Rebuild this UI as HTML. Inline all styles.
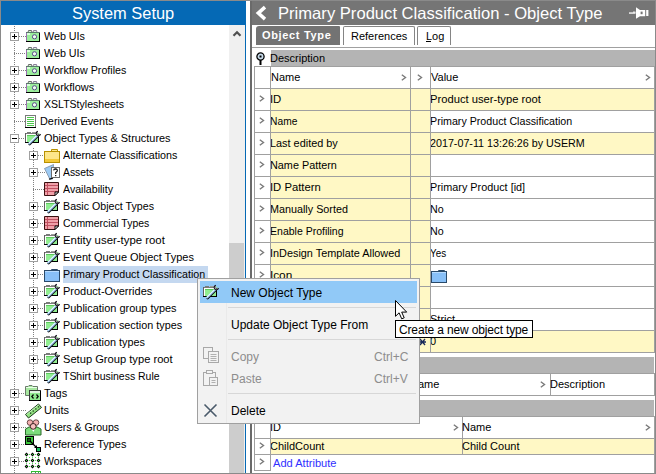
<!DOCTYPE html>
<html><head><meta charset="utf-8"><style>
html,body{margin:0;padding:0;}
body{width:656px;height:474px;position:relative;overflow:hidden;background:#fff;font-family:"Liberation Sans", sans-serif;}
</style></head><body>
<div style="position:absolute;left:1px;top:1px;width:245px;height:24px;background:#0569b5;"></div>
<div style="position:absolute;left:72px;top:3px;white-space:pre;font-size:16.5px;line-height:20px;font-weight:400;color:#ffffff;transform:scaleX(0.9950);transform-origin:1px 0;">System Setup</div>
<div style="position:absolute;left:245px;top:25px;width:1px;height:448px;background:#0569b5;"></div>
<div style="position:absolute;left:229px;top:25px;width:16px;height:448px;background:#f0f0f0;"></div>
<div style="position:absolute;left:229px;top:243px;width:15px;height:230px;background:#cdcdcd;"></div>
<svg style="position:absolute;left:232px;top:30px;overflow:visible" width="10" height="8" viewBox="0 0 10 8"><path d="M1.5 5.8 L5 2.3 L8.5 5.8" stroke="#505050" stroke-width="2.2" fill="none"/></svg>
<div style="position:absolute;left:14px;top:26px;width:1px;height:1px;background:#808080;"></div>
<div style="position:absolute;left:14px;top:28px;width:1px;height:1px;background:#808080;"></div>
<div style="position:absolute;left:14px;top:30px;width:1px;height:1px;background:#808080;"></div>
<div style="position:absolute;left:14px;top:32px;width:1px;height:1px;background:#808080;"></div>
<div style="position:absolute;left:14px;top:34px;width:1px;height:1px;background:#808080;"></div>
<div style="position:absolute;left:14px;top:36px;width:1px;height:1px;background:#808080;"></div>
<div style="position:absolute;left:14px;top:38px;width:1px;height:1px;background:#808080;"></div>
<div style="position:absolute;left:14px;top:40px;width:1px;height:1px;background:#808080;"></div>
<div style="position:absolute;left:14px;top:42px;width:1px;height:1px;background:#808080;"></div>
<div style="position:absolute;left:14px;top:44px;width:1px;height:1px;background:#808080;"></div>
<div style="position:absolute;left:14px;top:46px;width:1px;height:1px;background:#808080;"></div>
<div style="position:absolute;left:14px;top:48px;width:1px;height:1px;background:#808080;"></div>
<div style="position:absolute;left:14px;top:50px;width:1px;height:1px;background:#808080;"></div>
<div style="position:absolute;left:14px;top:52px;width:1px;height:1px;background:#808080;"></div>
<div style="position:absolute;left:14px;top:54px;width:1px;height:1px;background:#808080;"></div>
<div style="position:absolute;left:14px;top:56px;width:1px;height:1px;background:#808080;"></div>
<div style="position:absolute;left:14px;top:58px;width:1px;height:1px;background:#808080;"></div>
<div style="position:absolute;left:14px;top:60px;width:1px;height:1px;background:#808080;"></div>
<div style="position:absolute;left:14px;top:62px;width:1px;height:1px;background:#808080;"></div>
<div style="position:absolute;left:14px;top:64px;width:1px;height:1px;background:#808080;"></div>
<div style="position:absolute;left:14px;top:66px;width:1px;height:1px;background:#808080;"></div>
<div style="position:absolute;left:14px;top:68px;width:1px;height:1px;background:#808080;"></div>
<div style="position:absolute;left:14px;top:70px;width:1px;height:1px;background:#808080;"></div>
<div style="position:absolute;left:14px;top:72px;width:1px;height:1px;background:#808080;"></div>
<div style="position:absolute;left:14px;top:74px;width:1px;height:1px;background:#808080;"></div>
<div style="position:absolute;left:14px;top:76px;width:1px;height:1px;background:#808080;"></div>
<div style="position:absolute;left:14px;top:78px;width:1px;height:1px;background:#808080;"></div>
<div style="position:absolute;left:14px;top:80px;width:1px;height:1px;background:#808080;"></div>
<div style="position:absolute;left:14px;top:82px;width:1px;height:1px;background:#808080;"></div>
<div style="position:absolute;left:14px;top:84px;width:1px;height:1px;background:#808080;"></div>
<div style="position:absolute;left:14px;top:86px;width:1px;height:1px;background:#808080;"></div>
<div style="position:absolute;left:14px;top:88px;width:1px;height:1px;background:#808080;"></div>
<div style="position:absolute;left:14px;top:90px;width:1px;height:1px;background:#808080;"></div>
<div style="position:absolute;left:14px;top:92px;width:1px;height:1px;background:#808080;"></div>
<div style="position:absolute;left:14px;top:94px;width:1px;height:1px;background:#808080;"></div>
<div style="position:absolute;left:14px;top:96px;width:1px;height:1px;background:#808080;"></div>
<div style="position:absolute;left:14px;top:98px;width:1px;height:1px;background:#808080;"></div>
<div style="position:absolute;left:14px;top:100px;width:1px;height:1px;background:#808080;"></div>
<div style="position:absolute;left:14px;top:102px;width:1px;height:1px;background:#808080;"></div>
<div style="position:absolute;left:14px;top:104px;width:1px;height:1px;background:#808080;"></div>
<div style="position:absolute;left:14px;top:106px;width:1px;height:1px;background:#808080;"></div>
<div style="position:absolute;left:14px;top:108px;width:1px;height:1px;background:#808080;"></div>
<div style="position:absolute;left:14px;top:110px;width:1px;height:1px;background:#808080;"></div>
<div style="position:absolute;left:14px;top:112px;width:1px;height:1px;background:#808080;"></div>
<div style="position:absolute;left:14px;top:114px;width:1px;height:1px;background:#808080;"></div>
<div style="position:absolute;left:14px;top:116px;width:1px;height:1px;background:#808080;"></div>
<div style="position:absolute;left:14px;top:118px;width:1px;height:1px;background:#808080;"></div>
<div style="position:absolute;left:14px;top:120px;width:1px;height:1px;background:#808080;"></div>
<div style="position:absolute;left:14px;top:122px;width:1px;height:1px;background:#808080;"></div>
<div style="position:absolute;left:14px;top:124px;width:1px;height:1px;background:#808080;"></div>
<div style="position:absolute;left:14px;top:126px;width:1px;height:1px;background:#808080;"></div>
<div style="position:absolute;left:14px;top:128px;width:1px;height:1px;background:#808080;"></div>
<div style="position:absolute;left:14px;top:130px;width:1px;height:1px;background:#808080;"></div>
<div style="position:absolute;left:14px;top:132px;width:1px;height:1px;background:#808080;"></div>
<div style="position:absolute;left:14px;top:134px;width:1px;height:1px;background:#808080;"></div>
<div style="position:absolute;left:14px;top:136px;width:1px;height:1px;background:#808080;"></div>
<div style="position:absolute;left:14px;top:138px;width:1px;height:1px;background:#808080;"></div>
<div style="position:absolute;left:14px;top:140px;width:1px;height:1px;background:#808080;"></div>
<div style="position:absolute;left:14px;top:142px;width:1px;height:1px;background:#808080;"></div>
<div style="position:absolute;left:14px;top:144px;width:1px;height:1px;background:#808080;"></div>
<div style="position:absolute;left:14px;top:146px;width:1px;height:1px;background:#808080;"></div>
<div style="position:absolute;left:14px;top:148px;width:1px;height:1px;background:#808080;"></div>
<div style="position:absolute;left:14px;top:150px;width:1px;height:1px;background:#808080;"></div>
<div style="position:absolute;left:14px;top:152px;width:1px;height:1px;background:#808080;"></div>
<div style="position:absolute;left:14px;top:154px;width:1px;height:1px;background:#808080;"></div>
<div style="position:absolute;left:14px;top:156px;width:1px;height:1px;background:#808080;"></div>
<div style="position:absolute;left:14px;top:158px;width:1px;height:1px;background:#808080;"></div>
<div style="position:absolute;left:14px;top:160px;width:1px;height:1px;background:#808080;"></div>
<div style="position:absolute;left:14px;top:162px;width:1px;height:1px;background:#808080;"></div>
<div style="position:absolute;left:14px;top:164px;width:1px;height:1px;background:#808080;"></div>
<div style="position:absolute;left:14px;top:166px;width:1px;height:1px;background:#808080;"></div>
<div style="position:absolute;left:14px;top:168px;width:1px;height:1px;background:#808080;"></div>
<div style="position:absolute;left:14px;top:170px;width:1px;height:1px;background:#808080;"></div>
<div style="position:absolute;left:14px;top:172px;width:1px;height:1px;background:#808080;"></div>
<div style="position:absolute;left:14px;top:174px;width:1px;height:1px;background:#808080;"></div>
<div style="position:absolute;left:14px;top:176px;width:1px;height:1px;background:#808080;"></div>
<div style="position:absolute;left:14px;top:178px;width:1px;height:1px;background:#808080;"></div>
<div style="position:absolute;left:14px;top:180px;width:1px;height:1px;background:#808080;"></div>
<div style="position:absolute;left:14px;top:182px;width:1px;height:1px;background:#808080;"></div>
<div style="position:absolute;left:14px;top:184px;width:1px;height:1px;background:#808080;"></div>
<div style="position:absolute;left:14px;top:186px;width:1px;height:1px;background:#808080;"></div>
<div style="position:absolute;left:14px;top:188px;width:1px;height:1px;background:#808080;"></div>
<div style="position:absolute;left:14px;top:190px;width:1px;height:1px;background:#808080;"></div>
<div style="position:absolute;left:14px;top:192px;width:1px;height:1px;background:#808080;"></div>
<div style="position:absolute;left:14px;top:194px;width:1px;height:1px;background:#808080;"></div>
<div style="position:absolute;left:14px;top:196px;width:1px;height:1px;background:#808080;"></div>
<div style="position:absolute;left:14px;top:198px;width:1px;height:1px;background:#808080;"></div>
<div style="position:absolute;left:14px;top:200px;width:1px;height:1px;background:#808080;"></div>
<div style="position:absolute;left:14px;top:202px;width:1px;height:1px;background:#808080;"></div>
<div style="position:absolute;left:14px;top:204px;width:1px;height:1px;background:#808080;"></div>
<div style="position:absolute;left:14px;top:206px;width:1px;height:1px;background:#808080;"></div>
<div style="position:absolute;left:14px;top:208px;width:1px;height:1px;background:#808080;"></div>
<div style="position:absolute;left:14px;top:210px;width:1px;height:1px;background:#808080;"></div>
<div style="position:absolute;left:14px;top:212px;width:1px;height:1px;background:#808080;"></div>
<div style="position:absolute;left:14px;top:214px;width:1px;height:1px;background:#808080;"></div>
<div style="position:absolute;left:14px;top:216px;width:1px;height:1px;background:#808080;"></div>
<div style="position:absolute;left:14px;top:218px;width:1px;height:1px;background:#808080;"></div>
<div style="position:absolute;left:14px;top:220px;width:1px;height:1px;background:#808080;"></div>
<div style="position:absolute;left:14px;top:222px;width:1px;height:1px;background:#808080;"></div>
<div style="position:absolute;left:14px;top:224px;width:1px;height:1px;background:#808080;"></div>
<div style="position:absolute;left:14px;top:226px;width:1px;height:1px;background:#808080;"></div>
<div style="position:absolute;left:14px;top:228px;width:1px;height:1px;background:#808080;"></div>
<div style="position:absolute;left:14px;top:230px;width:1px;height:1px;background:#808080;"></div>
<div style="position:absolute;left:14px;top:232px;width:1px;height:1px;background:#808080;"></div>
<div style="position:absolute;left:14px;top:234px;width:1px;height:1px;background:#808080;"></div>
<div style="position:absolute;left:14px;top:236px;width:1px;height:1px;background:#808080;"></div>
<div style="position:absolute;left:14px;top:238px;width:1px;height:1px;background:#808080;"></div>
<div style="position:absolute;left:14px;top:240px;width:1px;height:1px;background:#808080;"></div>
<div style="position:absolute;left:14px;top:242px;width:1px;height:1px;background:#808080;"></div>
<div style="position:absolute;left:14px;top:244px;width:1px;height:1px;background:#808080;"></div>
<div style="position:absolute;left:14px;top:246px;width:1px;height:1px;background:#808080;"></div>
<div style="position:absolute;left:14px;top:248px;width:1px;height:1px;background:#808080;"></div>
<div style="position:absolute;left:14px;top:250px;width:1px;height:1px;background:#808080;"></div>
<div style="position:absolute;left:14px;top:252px;width:1px;height:1px;background:#808080;"></div>
<div style="position:absolute;left:14px;top:254px;width:1px;height:1px;background:#808080;"></div>
<div style="position:absolute;left:14px;top:256px;width:1px;height:1px;background:#808080;"></div>
<div style="position:absolute;left:14px;top:258px;width:1px;height:1px;background:#808080;"></div>
<div style="position:absolute;left:14px;top:260px;width:1px;height:1px;background:#808080;"></div>
<div style="position:absolute;left:14px;top:262px;width:1px;height:1px;background:#808080;"></div>
<div style="position:absolute;left:14px;top:264px;width:1px;height:1px;background:#808080;"></div>
<div style="position:absolute;left:14px;top:266px;width:1px;height:1px;background:#808080;"></div>
<div style="position:absolute;left:14px;top:268px;width:1px;height:1px;background:#808080;"></div>
<div style="position:absolute;left:14px;top:270px;width:1px;height:1px;background:#808080;"></div>
<div style="position:absolute;left:14px;top:272px;width:1px;height:1px;background:#808080;"></div>
<div style="position:absolute;left:14px;top:274px;width:1px;height:1px;background:#808080;"></div>
<div style="position:absolute;left:14px;top:276px;width:1px;height:1px;background:#808080;"></div>
<div style="position:absolute;left:14px;top:278px;width:1px;height:1px;background:#808080;"></div>
<div style="position:absolute;left:14px;top:280px;width:1px;height:1px;background:#808080;"></div>
<div style="position:absolute;left:14px;top:282px;width:1px;height:1px;background:#808080;"></div>
<div style="position:absolute;left:14px;top:284px;width:1px;height:1px;background:#808080;"></div>
<div style="position:absolute;left:14px;top:286px;width:1px;height:1px;background:#808080;"></div>
<div style="position:absolute;left:14px;top:288px;width:1px;height:1px;background:#808080;"></div>
<div style="position:absolute;left:14px;top:290px;width:1px;height:1px;background:#808080;"></div>
<div style="position:absolute;left:14px;top:292px;width:1px;height:1px;background:#808080;"></div>
<div style="position:absolute;left:14px;top:294px;width:1px;height:1px;background:#808080;"></div>
<div style="position:absolute;left:14px;top:296px;width:1px;height:1px;background:#808080;"></div>
<div style="position:absolute;left:14px;top:298px;width:1px;height:1px;background:#808080;"></div>
<div style="position:absolute;left:14px;top:300px;width:1px;height:1px;background:#808080;"></div>
<div style="position:absolute;left:14px;top:302px;width:1px;height:1px;background:#808080;"></div>
<div style="position:absolute;left:14px;top:304px;width:1px;height:1px;background:#808080;"></div>
<div style="position:absolute;left:14px;top:306px;width:1px;height:1px;background:#808080;"></div>
<div style="position:absolute;left:14px;top:308px;width:1px;height:1px;background:#808080;"></div>
<div style="position:absolute;left:14px;top:310px;width:1px;height:1px;background:#808080;"></div>
<div style="position:absolute;left:14px;top:312px;width:1px;height:1px;background:#808080;"></div>
<div style="position:absolute;left:14px;top:314px;width:1px;height:1px;background:#808080;"></div>
<div style="position:absolute;left:14px;top:316px;width:1px;height:1px;background:#808080;"></div>
<div style="position:absolute;left:14px;top:318px;width:1px;height:1px;background:#808080;"></div>
<div style="position:absolute;left:14px;top:320px;width:1px;height:1px;background:#808080;"></div>
<div style="position:absolute;left:14px;top:322px;width:1px;height:1px;background:#808080;"></div>
<div style="position:absolute;left:14px;top:324px;width:1px;height:1px;background:#808080;"></div>
<div style="position:absolute;left:14px;top:326px;width:1px;height:1px;background:#808080;"></div>
<div style="position:absolute;left:14px;top:328px;width:1px;height:1px;background:#808080;"></div>
<div style="position:absolute;left:14px;top:330px;width:1px;height:1px;background:#808080;"></div>
<div style="position:absolute;left:14px;top:332px;width:1px;height:1px;background:#808080;"></div>
<div style="position:absolute;left:14px;top:334px;width:1px;height:1px;background:#808080;"></div>
<div style="position:absolute;left:14px;top:336px;width:1px;height:1px;background:#808080;"></div>
<div style="position:absolute;left:14px;top:338px;width:1px;height:1px;background:#808080;"></div>
<div style="position:absolute;left:14px;top:340px;width:1px;height:1px;background:#808080;"></div>
<div style="position:absolute;left:14px;top:342px;width:1px;height:1px;background:#808080;"></div>
<div style="position:absolute;left:14px;top:344px;width:1px;height:1px;background:#808080;"></div>
<div style="position:absolute;left:14px;top:346px;width:1px;height:1px;background:#808080;"></div>
<div style="position:absolute;left:14px;top:348px;width:1px;height:1px;background:#808080;"></div>
<div style="position:absolute;left:14px;top:350px;width:1px;height:1px;background:#808080;"></div>
<div style="position:absolute;left:14px;top:352px;width:1px;height:1px;background:#808080;"></div>
<div style="position:absolute;left:14px;top:354px;width:1px;height:1px;background:#808080;"></div>
<div style="position:absolute;left:14px;top:356px;width:1px;height:1px;background:#808080;"></div>
<div style="position:absolute;left:14px;top:358px;width:1px;height:1px;background:#808080;"></div>
<div style="position:absolute;left:14px;top:360px;width:1px;height:1px;background:#808080;"></div>
<div style="position:absolute;left:14px;top:362px;width:1px;height:1px;background:#808080;"></div>
<div style="position:absolute;left:14px;top:364px;width:1px;height:1px;background:#808080;"></div>
<div style="position:absolute;left:14px;top:366px;width:1px;height:1px;background:#808080;"></div>
<div style="position:absolute;left:14px;top:368px;width:1px;height:1px;background:#808080;"></div>
<div style="position:absolute;left:14px;top:370px;width:1px;height:1px;background:#808080;"></div>
<div style="position:absolute;left:14px;top:372px;width:1px;height:1px;background:#808080;"></div>
<div style="position:absolute;left:14px;top:374px;width:1px;height:1px;background:#808080;"></div>
<div style="position:absolute;left:14px;top:376px;width:1px;height:1px;background:#808080;"></div>
<div style="position:absolute;left:14px;top:378px;width:1px;height:1px;background:#808080;"></div>
<div style="position:absolute;left:14px;top:380px;width:1px;height:1px;background:#808080;"></div>
<div style="position:absolute;left:14px;top:382px;width:1px;height:1px;background:#808080;"></div>
<div style="position:absolute;left:14px;top:384px;width:1px;height:1px;background:#808080;"></div>
<div style="position:absolute;left:14px;top:386px;width:1px;height:1px;background:#808080;"></div>
<div style="position:absolute;left:14px;top:388px;width:1px;height:1px;background:#808080;"></div>
<div style="position:absolute;left:14px;top:390px;width:1px;height:1px;background:#808080;"></div>
<div style="position:absolute;left:14px;top:392px;width:1px;height:1px;background:#808080;"></div>
<div style="position:absolute;left:14px;top:394px;width:1px;height:1px;background:#808080;"></div>
<div style="position:absolute;left:14px;top:396px;width:1px;height:1px;background:#808080;"></div>
<div style="position:absolute;left:14px;top:398px;width:1px;height:1px;background:#808080;"></div>
<div style="position:absolute;left:14px;top:400px;width:1px;height:1px;background:#808080;"></div>
<div style="position:absolute;left:14px;top:402px;width:1px;height:1px;background:#808080;"></div>
<div style="position:absolute;left:14px;top:404px;width:1px;height:1px;background:#808080;"></div>
<div style="position:absolute;left:14px;top:406px;width:1px;height:1px;background:#808080;"></div>
<div style="position:absolute;left:14px;top:408px;width:1px;height:1px;background:#808080;"></div>
<div style="position:absolute;left:14px;top:410px;width:1px;height:1px;background:#808080;"></div>
<div style="position:absolute;left:14px;top:412px;width:1px;height:1px;background:#808080;"></div>
<div style="position:absolute;left:14px;top:414px;width:1px;height:1px;background:#808080;"></div>
<div style="position:absolute;left:14px;top:416px;width:1px;height:1px;background:#808080;"></div>
<div style="position:absolute;left:14px;top:418px;width:1px;height:1px;background:#808080;"></div>
<div style="position:absolute;left:14px;top:420px;width:1px;height:1px;background:#808080;"></div>
<div style="position:absolute;left:14px;top:422px;width:1px;height:1px;background:#808080;"></div>
<div style="position:absolute;left:14px;top:424px;width:1px;height:1px;background:#808080;"></div>
<div style="position:absolute;left:14px;top:426px;width:1px;height:1px;background:#808080;"></div>
<div style="position:absolute;left:14px;top:428px;width:1px;height:1px;background:#808080;"></div>
<div style="position:absolute;left:14px;top:430px;width:1px;height:1px;background:#808080;"></div>
<div style="position:absolute;left:14px;top:432px;width:1px;height:1px;background:#808080;"></div>
<div style="position:absolute;left:14px;top:434px;width:1px;height:1px;background:#808080;"></div>
<div style="position:absolute;left:14px;top:436px;width:1px;height:1px;background:#808080;"></div>
<div style="position:absolute;left:14px;top:438px;width:1px;height:1px;background:#808080;"></div>
<div style="position:absolute;left:14px;top:440px;width:1px;height:1px;background:#808080;"></div>
<div style="position:absolute;left:14px;top:442px;width:1px;height:1px;background:#808080;"></div>
<div style="position:absolute;left:14px;top:444px;width:1px;height:1px;background:#808080;"></div>
<div style="position:absolute;left:14px;top:446px;width:1px;height:1px;background:#808080;"></div>
<div style="position:absolute;left:14px;top:448px;width:1px;height:1px;background:#808080;"></div>
<div style="position:absolute;left:14px;top:450px;width:1px;height:1px;background:#808080;"></div>
<div style="position:absolute;left:14px;top:452px;width:1px;height:1px;background:#808080;"></div>
<div style="position:absolute;left:14px;top:454px;width:1px;height:1px;background:#808080;"></div>
<div style="position:absolute;left:14px;top:456px;width:1px;height:1px;background:#808080;"></div>
<div style="position:absolute;left:14px;top:458px;width:1px;height:1px;background:#808080;"></div>
<div style="position:absolute;left:14px;top:460px;width:1px;height:1px;background:#808080;"></div>
<div style="position:absolute;left:14px;top:462px;width:1px;height:1px;background:#808080;"></div>
<div style="position:absolute;left:14px;top:464px;width:1px;height:1px;background:#808080;"></div>
<div style="position:absolute;left:14px;top:466px;width:1px;height:1px;background:#808080;"></div>
<div style="position:absolute;left:14px;top:468px;width:1px;height:1px;background:#808080;"></div>
<div style="position:absolute;left:14px;top:470px;width:1px;height:1px;background:#808080;"></div>
<div style="position:absolute;left:14px;top:472px;width:1px;height:1px;background:#808080;"></div>
<div style="position:absolute;left:33px;top:148px;width:1px;height:1px;background:#808080;"></div>
<div style="position:absolute;left:33px;top:150px;width:1px;height:1px;background:#808080;"></div>
<div style="position:absolute;left:33px;top:152px;width:1px;height:1px;background:#808080;"></div>
<div style="position:absolute;left:33px;top:154px;width:1px;height:1px;background:#808080;"></div>
<div style="position:absolute;left:33px;top:156px;width:1px;height:1px;background:#808080;"></div>
<div style="position:absolute;left:33px;top:158px;width:1px;height:1px;background:#808080;"></div>
<div style="position:absolute;left:33px;top:160px;width:1px;height:1px;background:#808080;"></div>
<div style="position:absolute;left:33px;top:162px;width:1px;height:1px;background:#808080;"></div>
<div style="position:absolute;left:33px;top:164px;width:1px;height:1px;background:#808080;"></div>
<div style="position:absolute;left:33px;top:166px;width:1px;height:1px;background:#808080;"></div>
<div style="position:absolute;left:33px;top:168px;width:1px;height:1px;background:#808080;"></div>
<div style="position:absolute;left:33px;top:170px;width:1px;height:1px;background:#808080;"></div>
<div style="position:absolute;left:33px;top:172px;width:1px;height:1px;background:#808080;"></div>
<div style="position:absolute;left:33px;top:174px;width:1px;height:1px;background:#808080;"></div>
<div style="position:absolute;left:33px;top:176px;width:1px;height:1px;background:#808080;"></div>
<div style="position:absolute;left:33px;top:178px;width:1px;height:1px;background:#808080;"></div>
<div style="position:absolute;left:33px;top:180px;width:1px;height:1px;background:#808080;"></div>
<div style="position:absolute;left:33px;top:182px;width:1px;height:1px;background:#808080;"></div>
<div style="position:absolute;left:33px;top:184px;width:1px;height:1px;background:#808080;"></div>
<div style="position:absolute;left:33px;top:186px;width:1px;height:1px;background:#808080;"></div>
<div style="position:absolute;left:33px;top:188px;width:1px;height:1px;background:#808080;"></div>
<div style="position:absolute;left:33px;top:190px;width:1px;height:1px;background:#808080;"></div>
<div style="position:absolute;left:33px;top:192px;width:1px;height:1px;background:#808080;"></div>
<div style="position:absolute;left:33px;top:194px;width:1px;height:1px;background:#808080;"></div>
<div style="position:absolute;left:33px;top:196px;width:1px;height:1px;background:#808080;"></div>
<div style="position:absolute;left:33px;top:198px;width:1px;height:1px;background:#808080;"></div>
<div style="position:absolute;left:33px;top:200px;width:1px;height:1px;background:#808080;"></div>
<div style="position:absolute;left:33px;top:202px;width:1px;height:1px;background:#808080;"></div>
<div style="position:absolute;left:33px;top:204px;width:1px;height:1px;background:#808080;"></div>
<div style="position:absolute;left:33px;top:206px;width:1px;height:1px;background:#808080;"></div>
<div style="position:absolute;left:33px;top:208px;width:1px;height:1px;background:#808080;"></div>
<div style="position:absolute;left:33px;top:210px;width:1px;height:1px;background:#808080;"></div>
<div style="position:absolute;left:33px;top:212px;width:1px;height:1px;background:#808080;"></div>
<div style="position:absolute;left:33px;top:214px;width:1px;height:1px;background:#808080;"></div>
<div style="position:absolute;left:33px;top:216px;width:1px;height:1px;background:#808080;"></div>
<div style="position:absolute;left:33px;top:218px;width:1px;height:1px;background:#808080;"></div>
<div style="position:absolute;left:33px;top:220px;width:1px;height:1px;background:#808080;"></div>
<div style="position:absolute;left:33px;top:222px;width:1px;height:1px;background:#808080;"></div>
<div style="position:absolute;left:33px;top:224px;width:1px;height:1px;background:#808080;"></div>
<div style="position:absolute;left:33px;top:226px;width:1px;height:1px;background:#808080;"></div>
<div style="position:absolute;left:33px;top:228px;width:1px;height:1px;background:#808080;"></div>
<div style="position:absolute;left:33px;top:230px;width:1px;height:1px;background:#808080;"></div>
<div style="position:absolute;left:33px;top:232px;width:1px;height:1px;background:#808080;"></div>
<div style="position:absolute;left:33px;top:234px;width:1px;height:1px;background:#808080;"></div>
<div style="position:absolute;left:33px;top:236px;width:1px;height:1px;background:#808080;"></div>
<div style="position:absolute;left:33px;top:238px;width:1px;height:1px;background:#808080;"></div>
<div style="position:absolute;left:33px;top:240px;width:1px;height:1px;background:#808080;"></div>
<div style="position:absolute;left:33px;top:242px;width:1px;height:1px;background:#808080;"></div>
<div style="position:absolute;left:33px;top:244px;width:1px;height:1px;background:#808080;"></div>
<div style="position:absolute;left:33px;top:246px;width:1px;height:1px;background:#808080;"></div>
<div style="position:absolute;left:33px;top:248px;width:1px;height:1px;background:#808080;"></div>
<div style="position:absolute;left:33px;top:250px;width:1px;height:1px;background:#808080;"></div>
<div style="position:absolute;left:33px;top:252px;width:1px;height:1px;background:#808080;"></div>
<div style="position:absolute;left:33px;top:254px;width:1px;height:1px;background:#808080;"></div>
<div style="position:absolute;left:33px;top:256px;width:1px;height:1px;background:#808080;"></div>
<div style="position:absolute;left:33px;top:258px;width:1px;height:1px;background:#808080;"></div>
<div style="position:absolute;left:33px;top:260px;width:1px;height:1px;background:#808080;"></div>
<div style="position:absolute;left:33px;top:262px;width:1px;height:1px;background:#808080;"></div>
<div style="position:absolute;left:33px;top:264px;width:1px;height:1px;background:#808080;"></div>
<div style="position:absolute;left:33px;top:266px;width:1px;height:1px;background:#808080;"></div>
<div style="position:absolute;left:33px;top:268px;width:1px;height:1px;background:#808080;"></div>
<div style="position:absolute;left:33px;top:270px;width:1px;height:1px;background:#808080;"></div>
<div style="position:absolute;left:33px;top:272px;width:1px;height:1px;background:#808080;"></div>
<div style="position:absolute;left:33px;top:274px;width:1px;height:1px;background:#808080;"></div>
<div style="position:absolute;left:33px;top:276px;width:1px;height:1px;background:#808080;"></div>
<div style="position:absolute;left:33px;top:278px;width:1px;height:1px;background:#808080;"></div>
<div style="position:absolute;left:33px;top:280px;width:1px;height:1px;background:#808080;"></div>
<div style="position:absolute;left:33px;top:282px;width:1px;height:1px;background:#808080;"></div>
<div style="position:absolute;left:33px;top:284px;width:1px;height:1px;background:#808080;"></div>
<div style="position:absolute;left:33px;top:286px;width:1px;height:1px;background:#808080;"></div>
<div style="position:absolute;left:33px;top:288px;width:1px;height:1px;background:#808080;"></div>
<div style="position:absolute;left:33px;top:290px;width:1px;height:1px;background:#808080;"></div>
<div style="position:absolute;left:33px;top:292px;width:1px;height:1px;background:#808080;"></div>
<div style="position:absolute;left:33px;top:294px;width:1px;height:1px;background:#808080;"></div>
<div style="position:absolute;left:33px;top:296px;width:1px;height:1px;background:#808080;"></div>
<div style="position:absolute;left:33px;top:298px;width:1px;height:1px;background:#808080;"></div>
<div style="position:absolute;left:33px;top:300px;width:1px;height:1px;background:#808080;"></div>
<div style="position:absolute;left:33px;top:302px;width:1px;height:1px;background:#808080;"></div>
<div style="position:absolute;left:33px;top:304px;width:1px;height:1px;background:#808080;"></div>
<div style="position:absolute;left:33px;top:306px;width:1px;height:1px;background:#808080;"></div>
<div style="position:absolute;left:33px;top:308px;width:1px;height:1px;background:#808080;"></div>
<div style="position:absolute;left:33px;top:310px;width:1px;height:1px;background:#808080;"></div>
<div style="position:absolute;left:33px;top:312px;width:1px;height:1px;background:#808080;"></div>
<div style="position:absolute;left:33px;top:314px;width:1px;height:1px;background:#808080;"></div>
<div style="position:absolute;left:33px;top:316px;width:1px;height:1px;background:#808080;"></div>
<div style="position:absolute;left:33px;top:318px;width:1px;height:1px;background:#808080;"></div>
<div style="position:absolute;left:33px;top:320px;width:1px;height:1px;background:#808080;"></div>
<div style="position:absolute;left:33px;top:322px;width:1px;height:1px;background:#808080;"></div>
<div style="position:absolute;left:33px;top:324px;width:1px;height:1px;background:#808080;"></div>
<div style="position:absolute;left:33px;top:326px;width:1px;height:1px;background:#808080;"></div>
<div style="position:absolute;left:33px;top:328px;width:1px;height:1px;background:#808080;"></div>
<div style="position:absolute;left:33px;top:330px;width:1px;height:1px;background:#808080;"></div>
<div style="position:absolute;left:33px;top:332px;width:1px;height:1px;background:#808080;"></div>
<div style="position:absolute;left:33px;top:334px;width:1px;height:1px;background:#808080;"></div>
<div style="position:absolute;left:33px;top:336px;width:1px;height:1px;background:#808080;"></div>
<div style="position:absolute;left:33px;top:338px;width:1px;height:1px;background:#808080;"></div>
<div style="position:absolute;left:33px;top:340px;width:1px;height:1px;background:#808080;"></div>
<div style="position:absolute;left:33px;top:342px;width:1px;height:1px;background:#808080;"></div>
<div style="position:absolute;left:33px;top:344px;width:1px;height:1px;background:#808080;"></div>
<div style="position:absolute;left:33px;top:346px;width:1px;height:1px;background:#808080;"></div>
<div style="position:absolute;left:33px;top:348px;width:1px;height:1px;background:#808080;"></div>
<div style="position:absolute;left:33px;top:350px;width:1px;height:1px;background:#808080;"></div>
<div style="position:absolute;left:33px;top:352px;width:1px;height:1px;background:#808080;"></div>
<div style="position:absolute;left:33px;top:354px;width:1px;height:1px;background:#808080;"></div>
<div style="position:absolute;left:33px;top:356px;width:1px;height:1px;background:#808080;"></div>
<div style="position:absolute;left:33px;top:358px;width:1px;height:1px;background:#808080;"></div>
<div style="position:absolute;left:33px;top:360px;width:1px;height:1px;background:#808080;"></div>
<div style="position:absolute;left:33px;top:362px;width:1px;height:1px;background:#808080;"></div>
<div style="position:absolute;left:33px;top:364px;width:1px;height:1px;background:#808080;"></div>
<div style="position:absolute;left:33px;top:366px;width:1px;height:1px;background:#808080;"></div>
<div style="position:absolute;left:33px;top:368px;width:1px;height:1px;background:#808080;"></div>
<div style="position:absolute;left:33px;top:370px;width:1px;height:1px;background:#808080;"></div>
<div style="position:absolute;left:33px;top:372px;width:1px;height:1px;background:#808080;"></div>
<div style="position:absolute;left:33px;top:374px;width:1px;height:1px;background:#808080;"></div>
<div style="position:absolute;left:33px;top:376px;width:1px;height:1px;background:#808080;"></div>
<div style="position:absolute;left:19px;top:36px;width:1px;height:1px;background:#808080;"></div>
<div style="position:absolute;left:21px;top:36px;width:1px;height:1px;background:#808080;"></div>
<div style="position:absolute;left:23px;top:36px;width:1px;height:1px;background:#808080;"></div>
<div style="position:absolute;left:25px;top:36px;width:1px;height:1px;background:#808080;"></div>
<div style="position:absolute;left:10px;top:32px;width:7px;height:7px;border:1px solid #a0a0a0;background:#fff"></div>
<div style="position:absolute;left:12px;top:36px;width:5px;height:1px;background:#000;"></div>
<div style="position:absolute;left:14px;top:34px;width:1px;height:5px;background:#000;"></div>
<svg style="position:absolute;left:25px;top:28px;overflow:visible" width="16" height="16" viewBox="0 0 16 16"><path d="M3 4.5 L3.5 2.5 H6.5 L7 4.5" fill="#d8f8d8" stroke="#6a6a6a" stroke-width="1"/><path d="M8 4.5 L8.5 2.5 H11.5 L12 4.5" fill="#d8f8d8" stroke="#8a7a9a" stroke-width="1"/><rect x="1" y="4" width="14" height="10" fill="#9cee9c"/><rect x="2" y="5" width="3" height="2" fill="#d8ffd8"/><rect x="1" y="4" width="1" height="10" fill="#9a70b0"/><rect x="1" y="4" width="14" height="1" fill="#5a7a6a"/><rect x="1" y="13" width="14" height="1" fill="#000"/><rect x="14" y="5" width="1" height="9" fill="#000"/><circle cx="9.5" cy="8.8" r="2.1" fill="#f0fff0" stroke="#5a4a8a" stroke-width="1"/></svg>
<div style="position:absolute;left:44px;top:26px;white-space:pre;font-size:11px;line-height:20px;font-weight:400;color:#000;transform:scaleX(0.9762);transform-origin:0px 0;">Web UIs</div>
<div style="position:absolute;left:14px;top:53px;width:1px;height:1px;background:#808080;"></div>
<div style="position:absolute;left:16px;top:53px;width:1px;height:1px;background:#808080;"></div>
<div style="position:absolute;left:18px;top:53px;width:1px;height:1px;background:#808080;"></div>
<div style="position:absolute;left:20px;top:53px;width:1px;height:1px;background:#808080;"></div>
<div style="position:absolute;left:22px;top:53px;width:1px;height:1px;background:#808080;"></div>
<div style="position:absolute;left:24px;top:53px;width:1px;height:1px;background:#808080;"></div>
<svg style="position:absolute;left:25px;top:45px;overflow:visible" width="16" height="16" viewBox="0 0 16 16"><path d="M3 4.5 L3.5 2.5 H6.5 L7 4.5" fill="#d8f8d8" stroke="#6a6a6a" stroke-width="1"/><path d="M8 4.5 L8.5 2.5 H11.5 L12 4.5" fill="#d8f8d8" stroke="#8a7a9a" stroke-width="1"/><rect x="1" y="4" width="14" height="10" fill="#9cee9c"/><rect x="2" y="5" width="3" height="2" fill="#d8ffd8"/><rect x="1" y="4" width="1" height="10" fill="#9a70b0"/><rect x="1" y="4" width="14" height="1" fill="#5a7a6a"/><rect x="1" y="13" width="14" height="1" fill="#000"/><rect x="14" y="5" width="1" height="9" fill="#000"/><circle cx="9.5" cy="8.8" r="2.1" fill="#f0fff0" stroke="#5a4a8a" stroke-width="1"/></svg>
<div style="position:absolute;left:44px;top:43px;white-space:pre;font-size:11px;line-height:20px;font-weight:400;color:#000;transform:scaleX(0.9762);transform-origin:0px 0;">Web UIs</div>
<div style="position:absolute;left:19px;top:70px;width:1px;height:1px;background:#808080;"></div>
<div style="position:absolute;left:21px;top:70px;width:1px;height:1px;background:#808080;"></div>
<div style="position:absolute;left:23px;top:70px;width:1px;height:1px;background:#808080;"></div>
<div style="position:absolute;left:25px;top:70px;width:1px;height:1px;background:#808080;"></div>
<div style="position:absolute;left:10px;top:66px;width:7px;height:7px;border:1px solid #a0a0a0;background:#fff"></div>
<div style="position:absolute;left:12px;top:70px;width:5px;height:1px;background:#000;"></div>
<div style="position:absolute;left:14px;top:68px;width:1px;height:5px;background:#000;"></div>
<svg style="position:absolute;left:25px;top:62px;overflow:visible" width="16" height="16" viewBox="0 0 16 16"><path d="M3 4.5 L3.5 2.5 H6.5 L7 4.5" fill="#d8f8d8" stroke="#6a6a6a" stroke-width="1"/><path d="M8 4.5 L8.5 2.5 H11.5 L12 4.5" fill="#d8f8d8" stroke="#8a7a9a" stroke-width="1"/><rect x="1" y="4" width="14" height="10" fill="#9cee9c"/><rect x="2" y="5" width="3" height="2" fill="#d8ffd8"/><rect x="1" y="4" width="1" height="10" fill="#9a70b0"/><rect x="1" y="4" width="14" height="1" fill="#5a7a6a"/><rect x="1" y="13" width="14" height="1" fill="#000"/><rect x="14" y="5" width="1" height="9" fill="#000"/><circle cx="9.5" cy="8.8" r="2.1" fill="#f0fff0" stroke="#5a4a8a" stroke-width="1"/></svg>
<div style="position:absolute;left:44px;top:60px;white-space:pre;font-size:11px;line-height:20px;font-weight:400;color:#000;transform:scaleX(0.9718);transform-origin:0px 0;">Workflow Profiles</div>
<div style="position:absolute;left:19px;top:87px;width:1px;height:1px;background:#808080;"></div>
<div style="position:absolute;left:21px;top:87px;width:1px;height:1px;background:#808080;"></div>
<div style="position:absolute;left:23px;top:87px;width:1px;height:1px;background:#808080;"></div>
<div style="position:absolute;left:25px;top:87px;width:1px;height:1px;background:#808080;"></div>
<div style="position:absolute;left:10px;top:83px;width:7px;height:7px;border:1px solid #a0a0a0;background:#fff"></div>
<div style="position:absolute;left:12px;top:87px;width:5px;height:1px;background:#000;"></div>
<div style="position:absolute;left:14px;top:85px;width:1px;height:5px;background:#000;"></div>
<svg style="position:absolute;left:25px;top:79px;overflow:visible" width="16" height="16" viewBox="0 0 16 16"><path d="M3 4.5 L3.5 2.5 H6.5 L7 4.5" fill="#d8f8d8" stroke="#6a6a6a" stroke-width="1"/><path d="M8 4.5 L8.5 2.5 H11.5 L12 4.5" fill="#d8f8d8" stroke="#8a7a9a" stroke-width="1"/><rect x="1" y="4" width="14" height="10" fill="#9cee9c"/><rect x="2" y="5" width="3" height="2" fill="#d8ffd8"/><rect x="1" y="4" width="1" height="10" fill="#9a70b0"/><rect x="1" y="4" width="14" height="1" fill="#5a7a6a"/><rect x="1" y="13" width="14" height="1" fill="#000"/><rect x="14" y="5" width="1" height="9" fill="#000"/><circle cx="9.5" cy="8.8" r="2.1" fill="#f0fff0" stroke="#5a4a8a" stroke-width="1"/></svg>
<div style="position:absolute;left:44px;top:77px;white-space:pre;font-size:11px;line-height:20px;font-weight:400;color:#000;transform:scaleX(0.9940);transform-origin:0px 0;">Workflows</div>
<div style="position:absolute;left:19px;top:104px;width:1px;height:1px;background:#808080;"></div>
<div style="position:absolute;left:21px;top:104px;width:1px;height:1px;background:#808080;"></div>
<div style="position:absolute;left:23px;top:104px;width:1px;height:1px;background:#808080;"></div>
<div style="position:absolute;left:25px;top:104px;width:1px;height:1px;background:#808080;"></div>
<div style="position:absolute;left:10px;top:100px;width:7px;height:7px;border:1px solid #a0a0a0;background:#fff"></div>
<div style="position:absolute;left:12px;top:104px;width:5px;height:1px;background:#000;"></div>
<div style="position:absolute;left:14px;top:102px;width:1px;height:5px;background:#000;"></div>
<svg style="position:absolute;left:25px;top:96px;overflow:visible" width="16" height="16" viewBox="0 0 16 16"><path d="M3 4.5 L3.5 2.5 H6.5 L7 4.5" fill="#d8f8d8" stroke="#6a6a6a" stroke-width="1"/><path d="M8 4.5 L8.5 2.5 H11.5 L12 4.5" fill="#d8f8d8" stroke="#8a7a9a" stroke-width="1"/><rect x="1" y="4" width="14" height="10" fill="#9cee9c"/><rect x="2" y="5" width="3" height="2" fill="#d8ffd8"/><rect x="1" y="4" width="1" height="10" fill="#9a70b0"/><rect x="1" y="4" width="14" height="1" fill="#5a7a6a"/><rect x="1" y="13" width="14" height="1" fill="#000"/><rect x="14" y="5" width="1" height="9" fill="#000"/><circle cx="9.5" cy="8.8" r="2.1" fill="#f0fff0" stroke="#5a4a8a" stroke-width="1"/></svg>
<div style="position:absolute;left:44px;top:94px;white-space:pre;font-size:11px;line-height:20px;font-weight:400;color:#000;transform:scaleX(0.9573);transform-origin:1px 0;">XSLTStylesheets</div>
<div style="position:absolute;left:14px;top:121px;width:1px;height:1px;background:#808080;"></div>
<div style="position:absolute;left:16px;top:121px;width:1px;height:1px;background:#808080;"></div>
<div style="position:absolute;left:18px;top:121px;width:1px;height:1px;background:#808080;"></div>
<div style="position:absolute;left:20px;top:121px;width:1px;height:1px;background:#808080;"></div>
<div style="position:absolute;left:22px;top:121px;width:1px;height:1px;background:#808080;"></div>
<div style="position:absolute;left:24px;top:121px;width:1px;height:1px;background:#808080;"></div>
<svg style="position:absolute;left:25px;top:115px;overflow:visible" width="16" height="16" viewBox="0 0 16 16" shape-rendering="crispEdges"><rect x="0.5" y="0.5" width="10" height="12" fill="#fff" stroke="#7a7a7a"/><rect x="2" y="2" width="7" height="1" fill="#4cc84c"/><rect x="2" y="4" width="7" height="1" fill="#4cc84c"/><rect x="2" y="6" width="7" height="1" fill="#4cc84c"/><rect x="2" y="8" width="7" height="1" fill="#4cc84c"/><rect x="2" y="10" width="7" height="1" fill="#4cc84c"/><rect x="0" y="12" width="11" height="1" fill="#000"/></svg>
<div style="position:absolute;left:40px;top:111px;white-space:pre;font-size:11px;line-height:20px;font-weight:400;color:#000;transform:scaleX(0.9863);transform-origin:1px 0;">Derived Events</div>
<div style="position:absolute;left:19px;top:138px;width:1px;height:1px;background:#808080;"></div>
<div style="position:absolute;left:21px;top:138px;width:1px;height:1px;background:#808080;"></div>
<div style="position:absolute;left:23px;top:138px;width:1px;height:1px;background:#808080;"></div>
<div style="position:absolute;left:25px;top:138px;width:1px;height:1px;background:#808080;"></div>
<div style="position:absolute;left:10px;top:134px;width:7px;height:7px;border:1px solid #a0a0a0;background:#fff"></div>
<div style="position:absolute;left:12px;top:138px;width:5px;height:1px;background:#000;"></div>
<svg style="position:absolute;left:25px;top:130px;overflow:visible" width="18" height="16" viewBox="0 0 18 16" shape-rendering="crispEdges"><rect x="2" y="2" width="4" height="1" fill="#7a7a7a"/><rect x="7" y="2" width="4" height="1" fill="#9a9a9a"/><rect x="0" y="3" width="14" height="10" fill="#90ee90"/><rect x="0" y="3" width="1" height="10" fill="#606060"/><rect x="1" y="3" width="12" height="1" fill="#7a7a7a"/><rect x="1" y="4" width="11" height="1" fill="#ffffff"/><rect x="1" y="5" width="1" height="7" fill="#ffffff"/><rect x="2" y="5" width="10" height="1" fill="#5cc85c"/><rect x="0" y="12" width="14" height="1" fill="#000"/><rect x="13" y="4" width="1" height="9" fill="#000"/><path d="M4.6 14.1 L12.8 5.9" stroke="#101018" stroke-width="2.6" stroke-linecap="round" shape-rendering="auto"/><path d="M4.1 13.5 L12.4 5.2" stroke="#a4d2f8" stroke-width="2" stroke-linecap="round" shape-rendering="auto"/><path d="M3.7 13.2 L12 4.9" stroke="#ffffff" stroke-width="0.9" shape-rendering="auto"/><path d="M12.9 1.6 A2 2 0 1 0 15.3 4" stroke="#101018" stroke-width="1.5" fill="none" shape-rendering="auto"/><path d="M13 2.4 A1.3 1.3 0 1 0 14.6 3.8" stroke="#d8d8d8" stroke-width="0.6" fill="none" shape-rendering="auto"/></svg>
<div style="position:absolute;left:44px;top:128px;white-space:pre;font-size:11px;line-height:20px;font-weight:400;color:#000;transform:scaleX(0.9921);transform-origin:0px 0;">Object Types &amp; Structures</div>
<div style="position:absolute;left:38px;top:155px;width:1px;height:1px;background:#808080;"></div>
<div style="position:absolute;left:40px;top:155px;width:1px;height:1px;background:#808080;"></div>
<div style="position:absolute;left:42px;top:155px;width:1px;height:1px;background:#808080;"></div>
<div style="position:absolute;left:44px;top:155px;width:1px;height:1px;background:#808080;"></div>
<div style="position:absolute;left:29px;top:151px;width:7px;height:7px;border:1px solid #a0a0a0;background:#fff"></div>
<div style="position:absolute;left:31px;top:155px;width:5px;height:1px;background:#000;"></div>
<div style="position:absolute;left:33px;top:153px;width:1px;height:5px;background:#000;"></div>
<svg style="position:absolute;left:44px;top:147px;overflow:visible" width="16" height="16" viewBox="0 0 16 16"><path d="M7.5 2.5 H13.5 V4.5 H7.5 Z" fill="#fde88a" stroke="#b89000"/><rect x="0.5" y="4.5" width="15" height="11" fill="#fde68a" stroke="#b89000"/><rect x="1" y="12" width="14" height="3" fill="#f2c838"/></svg>
<div style="position:absolute;left:63px;top:145px;white-space:pre;font-size:11px;line-height:20px;font-weight:400;color:#000;transform:scaleX(0.9744);transform-origin:0px 0;">Alternate Classifications</div>
<div style="position:absolute;left:38px;top:172px;width:1px;height:1px;background:#808080;"></div>
<div style="position:absolute;left:40px;top:172px;width:1px;height:1px;background:#808080;"></div>
<div style="position:absolute;left:42px;top:172px;width:1px;height:1px;background:#808080;"></div>
<div style="position:absolute;left:44px;top:172px;width:1px;height:1px;background:#808080;"></div>
<div style="position:absolute;left:29px;top:168px;width:7px;height:7px;border:1px solid #a0a0a0;background:#fff"></div>
<div style="position:absolute;left:31px;top:172px;width:5px;height:1px;background:#000;"></div>
<div style="position:absolute;left:33px;top:170px;width:1px;height:5px;background:#000;"></div>
<svg style="position:absolute;left:44px;top:164px;overflow:visible" width="16" height="16" viewBox="0 0 16 16"><path d="M0.5 4.5 L9.5 0.5 L8.5 15 L6 15.5 Z" fill="#9ccaf4" stroke="#7a8aa0" stroke-width="0.8"/><path d="M5 15.3 L9 14" stroke="#000" stroke-width="1.2"/><rect x="7.5" y="3.5" width="8" height="10" fill="#fff" stroke="#6a6a6a"/><path d="M9.6 6.4 Q9.8 4.9 11.6 4.9 Q13.4 5 13.3 6.6 Q13.2 7.8 11.7 8.5 L11.7 10" stroke="#000" stroke-width="1.1" fill="none"/><rect x="11.1" y="11" width="1.2" height="1.2" fill="#000"/></svg>
<div style="position:absolute;left:63px;top:162px;white-space:pre;font-size:11px;line-height:20px;font-weight:400;color:#000;transform:scaleX(0.9394);transform-origin:0px 0;">Assets</div>
<div style="position:absolute;left:33px;top:189px;width:1px;height:1px;background:#808080;"></div>
<div style="position:absolute;left:35px;top:189px;width:1px;height:1px;background:#808080;"></div>
<div style="position:absolute;left:37px;top:189px;width:1px;height:1px;background:#808080;"></div>
<div style="position:absolute;left:39px;top:189px;width:1px;height:1px;background:#808080;"></div>
<div style="position:absolute;left:41px;top:189px;width:1px;height:1px;background:#808080;"></div>
<div style="position:absolute;left:43px;top:189px;width:1px;height:1px;background:#808080;"></div>
<svg style="position:absolute;left:44px;top:182px;overflow:visible" width="16" height="16" viewBox="0 0 16 16"><path d="M0.5 0.5 H14.5 V10 L11 13.5 H0.5 Z" fill="#f0a0a8" stroke="#3a1010"/><rect x="1" y="3" width="13" height="1" fill="#c05060"/><rect x="1" y="6" width="13" height="1" fill="#c05060"/><rect x="1" y="9" width="13" height="1" fill="#c05060"/><rect x="3" y="1" width="1" height="12" fill="#c05060"/><path d="M11 13.5 L11 10 L14.5 10 Z" fill="#fff" stroke="#000"/></svg>
<div style="position:absolute;left:63px;top:179px;white-space:pre;font-size:11px;line-height:20px;font-weight:400;color:#000;transform:scaleX(0.9654);transform-origin:0px 0;">Availability</div>
<div style="position:absolute;left:38px;top:206px;width:1px;height:1px;background:#808080;"></div>
<div style="position:absolute;left:40px;top:206px;width:1px;height:1px;background:#808080;"></div>
<div style="position:absolute;left:42px;top:206px;width:1px;height:1px;background:#808080;"></div>
<div style="position:absolute;left:44px;top:206px;width:1px;height:1px;background:#808080;"></div>
<div style="position:absolute;left:29px;top:202px;width:7px;height:7px;border:1px solid #a0a0a0;background:#fff"></div>
<div style="position:absolute;left:31px;top:206px;width:5px;height:1px;background:#000;"></div>
<div style="position:absolute;left:33px;top:204px;width:1px;height:5px;background:#000;"></div>
<svg style="position:absolute;left:44px;top:198px;overflow:visible" width="18" height="16" viewBox="0 0 18 16" shape-rendering="crispEdges"><rect x="2" y="2" width="4" height="1" fill="#7a7a7a"/><rect x="7" y="2" width="4" height="1" fill="#9a9a9a"/><rect x="0" y="3" width="14" height="10" fill="#90ee90"/><rect x="0" y="3" width="1" height="10" fill="#606060"/><rect x="1" y="3" width="12" height="1" fill="#7a7a7a"/><rect x="1" y="4" width="11" height="1" fill="#ffffff"/><rect x="1" y="5" width="1" height="7" fill="#ffffff"/><rect x="2" y="5" width="10" height="1" fill="#5cc85c"/><rect x="0" y="12" width="14" height="1" fill="#000"/><rect x="13" y="4" width="1" height="9" fill="#000"/><path d="M4.6 14.1 L12.8 5.9" stroke="#101018" stroke-width="2.6" stroke-linecap="round" shape-rendering="auto"/><path d="M4.1 13.5 L12.4 5.2" stroke="#a4d2f8" stroke-width="2" stroke-linecap="round" shape-rendering="auto"/><path d="M3.7 13.2 L12 4.9" stroke="#ffffff" stroke-width="0.9" shape-rendering="auto"/><path d="M12.9 1.6 A2 2 0 1 0 15.3 4" stroke="#101018" stroke-width="1.5" fill="none" shape-rendering="auto"/><path d="M13 2.4 A1.3 1.3 0 1 0 14.6 3.8" stroke="#d8d8d8" stroke-width="0.6" fill="none" shape-rendering="auto"/></svg>
<div style="position:absolute;left:63px;top:196px;white-space:pre;font-size:11px;line-height:20px;font-weight:400;color:#000;transform:scaleX(0.9677);transform-origin:1px 0;">Basic Object Types</div>
<div style="position:absolute;left:38px;top:223px;width:1px;height:1px;background:#808080;"></div>
<div style="position:absolute;left:40px;top:223px;width:1px;height:1px;background:#808080;"></div>
<div style="position:absolute;left:42px;top:223px;width:1px;height:1px;background:#808080;"></div>
<div style="position:absolute;left:44px;top:223px;width:1px;height:1px;background:#808080;"></div>
<div style="position:absolute;left:29px;top:219px;width:7px;height:7px;border:1px solid #a0a0a0;background:#fff"></div>
<div style="position:absolute;left:31px;top:223px;width:5px;height:1px;background:#000;"></div>
<div style="position:absolute;left:33px;top:221px;width:1px;height:5px;background:#000;"></div>
<svg style="position:absolute;left:44px;top:216px;overflow:visible" width="16" height="16" viewBox="0 0 16 16"><path d="M0.5 0.5 H14.5 V10 L11 13.5 H0.5 Z" fill="#f0a0a8" stroke="#3a1010"/><rect x="1" y="3" width="13" height="1" fill="#c05060"/><rect x="1" y="6" width="13" height="1" fill="#c05060"/><rect x="1" y="9" width="13" height="1" fill="#c05060"/><rect x="3" y="1" width="1" height="12" fill="#c05060"/><path d="M11 13.5 L11 10 L14.5 10 Z" fill="#fff" stroke="#000"/></svg>
<div style="position:absolute;left:63px;top:213px;white-space:pre;font-size:11px;line-height:20px;font-weight:400;color:#000;transform:scaleX(0.9478);transform-origin:1px 0;">Commercial Types</div>
<div style="position:absolute;left:38px;top:240px;width:1px;height:1px;background:#808080;"></div>
<div style="position:absolute;left:40px;top:240px;width:1px;height:1px;background:#808080;"></div>
<div style="position:absolute;left:42px;top:240px;width:1px;height:1px;background:#808080;"></div>
<div style="position:absolute;left:44px;top:240px;width:1px;height:1px;background:#808080;"></div>
<div style="position:absolute;left:29px;top:236px;width:7px;height:7px;border:1px solid #a0a0a0;background:#fff"></div>
<div style="position:absolute;left:31px;top:240px;width:5px;height:1px;background:#000;"></div>
<div style="position:absolute;left:33px;top:238px;width:1px;height:5px;background:#000;"></div>
<svg style="position:absolute;left:44px;top:232px;overflow:visible" width="18" height="16" viewBox="0 0 18 16" shape-rendering="crispEdges"><rect x="2" y="2" width="4" height="1" fill="#7a7a7a"/><rect x="7" y="2" width="4" height="1" fill="#9a9a9a"/><rect x="0" y="3" width="14" height="10" fill="#90ee90"/><rect x="0" y="3" width="1" height="10" fill="#606060"/><rect x="1" y="3" width="12" height="1" fill="#7a7a7a"/><rect x="1" y="4" width="11" height="1" fill="#ffffff"/><rect x="1" y="5" width="1" height="7" fill="#ffffff"/><rect x="2" y="5" width="10" height="1" fill="#5cc85c"/><rect x="0" y="12" width="14" height="1" fill="#000"/><rect x="13" y="4" width="1" height="9" fill="#000"/><path d="M4.6 14.1 L12.8 5.9" stroke="#101018" stroke-width="2.6" stroke-linecap="round" shape-rendering="auto"/><path d="M4.1 13.5 L12.4 5.2" stroke="#a4d2f8" stroke-width="2" stroke-linecap="round" shape-rendering="auto"/><path d="M3.7 13.2 L12 4.9" stroke="#ffffff" stroke-width="0.9" shape-rendering="auto"/><path d="M12.9 1.6 A2 2 0 1 0 15.3 4" stroke="#101018" stroke-width="1.5" fill="none" shape-rendering="auto"/><path d="M13 2.4 A1.3 1.3 0 1 0 14.6 3.8" stroke="#d8d8d8" stroke-width="0.6" fill="none" shape-rendering="auto"/></svg>
<div style="position:absolute;left:63px;top:230px;white-space:pre;font-size:11px;line-height:20px;font-weight:400;color:#000;transform:scaleX(1.0351);transform-origin:1px 0;">Entity user-type root</div>
<div style="position:absolute;left:38px;top:257px;width:1px;height:1px;background:#808080;"></div>
<div style="position:absolute;left:40px;top:257px;width:1px;height:1px;background:#808080;"></div>
<div style="position:absolute;left:42px;top:257px;width:1px;height:1px;background:#808080;"></div>
<div style="position:absolute;left:44px;top:257px;width:1px;height:1px;background:#808080;"></div>
<div style="position:absolute;left:29px;top:253px;width:7px;height:7px;border:1px solid #a0a0a0;background:#fff"></div>
<div style="position:absolute;left:31px;top:257px;width:5px;height:1px;background:#000;"></div>
<div style="position:absolute;left:33px;top:255px;width:1px;height:5px;background:#000;"></div>
<svg style="position:absolute;left:44px;top:249px;overflow:visible" width="18" height="16" viewBox="0 0 18 16" shape-rendering="crispEdges"><rect x="2" y="2" width="4" height="1" fill="#7a7a7a"/><rect x="7" y="2" width="4" height="1" fill="#9a9a9a"/><rect x="0" y="3" width="14" height="10" fill="#90ee90"/><rect x="0" y="3" width="1" height="10" fill="#606060"/><rect x="1" y="3" width="12" height="1" fill="#7a7a7a"/><rect x="1" y="4" width="11" height="1" fill="#ffffff"/><rect x="1" y="5" width="1" height="7" fill="#ffffff"/><rect x="2" y="5" width="10" height="1" fill="#5cc85c"/><rect x="0" y="12" width="14" height="1" fill="#000"/><rect x="13" y="4" width="1" height="9" fill="#000"/><path d="M4.6 14.1 L12.8 5.9" stroke="#101018" stroke-width="2.6" stroke-linecap="round" shape-rendering="auto"/><path d="M4.1 13.5 L12.4 5.2" stroke="#a4d2f8" stroke-width="2" stroke-linecap="round" shape-rendering="auto"/><path d="M3.7 13.2 L12 4.9" stroke="#ffffff" stroke-width="0.9" shape-rendering="auto"/><path d="M12.9 1.6 A2 2 0 1 0 15.3 4" stroke="#101018" stroke-width="1.5" fill="none" shape-rendering="auto"/><path d="M13 2.4 A1.3 1.3 0 1 0 14.6 3.8" stroke="#d8d8d8" stroke-width="0.6" fill="none" shape-rendering="auto"/></svg>
<div style="position:absolute;left:63px;top:247px;white-space:pre;font-size:11px;line-height:20px;font-weight:400;color:#000;transform:scaleX(0.9969);transform-origin:1px 0;">Event Queue Object Types</div>
<div style="position:absolute;left:38px;top:274px;width:1px;height:1px;background:#808080;"></div>
<div style="position:absolute;left:40px;top:274px;width:1px;height:1px;background:#808080;"></div>
<div style="position:absolute;left:42px;top:274px;width:1px;height:1px;background:#808080;"></div>
<div style="position:absolute;left:44px;top:274px;width:1px;height:1px;background:#808080;"></div>
<div style="position:absolute;left:29px;top:270px;width:7px;height:7px;border:1px solid #a0a0a0;background:#fff"></div>
<div style="position:absolute;left:31px;top:274px;width:5px;height:1px;background:#000;"></div>
<div style="position:absolute;left:33px;top:272px;width:1px;height:5px;background:#000;"></div>
<div style="position:absolute;left:63px;top:266px;width:145px;height:17px;background:#c4d8f0;"></div>
<svg style="position:absolute;left:44px;top:266px;overflow:visible" width="16" height="16" viewBox="0 0 16 16"><path d="M7.5 3.5 H13.5 V5.5 H7.5 Z" fill="#ffffff" stroke="#2a4a6a"/><rect x="0.5" y="4.5" width="15" height="11" fill="#88c0f8" stroke="#2a4a6a"/><rect x="1" y="5" width="14" height="1" fill="#b8dcff"/></svg>
<div style="position:absolute;left:63px;top:264px;white-space:pre;font-size:11px;line-height:20px;font-weight:400;color:#000;transform:scaleX(0.9683);transform-origin:1px 0;">Primary Product Classification</div>
<div style="position:absolute;left:38px;top:291px;width:1px;height:1px;background:#808080;"></div>
<div style="position:absolute;left:40px;top:291px;width:1px;height:1px;background:#808080;"></div>
<div style="position:absolute;left:42px;top:291px;width:1px;height:1px;background:#808080;"></div>
<div style="position:absolute;left:44px;top:291px;width:1px;height:1px;background:#808080;"></div>
<div style="position:absolute;left:29px;top:287px;width:7px;height:7px;border:1px solid #a0a0a0;background:#fff"></div>
<div style="position:absolute;left:31px;top:291px;width:5px;height:1px;background:#000;"></div>
<div style="position:absolute;left:33px;top:289px;width:1px;height:5px;background:#000;"></div>
<svg style="position:absolute;left:44px;top:283px;overflow:visible" width="18" height="16" viewBox="0 0 18 16" shape-rendering="crispEdges"><rect x="2" y="2" width="4" height="1" fill="#7a7a7a"/><rect x="7" y="2" width="4" height="1" fill="#9a9a9a"/><rect x="0" y="3" width="14" height="10" fill="#90ee90"/><rect x="0" y="3" width="1" height="10" fill="#606060"/><rect x="1" y="3" width="12" height="1" fill="#7a7a7a"/><rect x="1" y="4" width="11" height="1" fill="#ffffff"/><rect x="1" y="5" width="1" height="7" fill="#ffffff"/><rect x="2" y="5" width="10" height="1" fill="#5cc85c"/><rect x="0" y="12" width="14" height="1" fill="#000"/><rect x="13" y="4" width="1" height="9" fill="#000"/><path d="M4.6 14.1 L12.8 5.9" stroke="#101018" stroke-width="2.6" stroke-linecap="round" shape-rendering="auto"/><path d="M4.1 13.5 L12.4 5.2" stroke="#a4d2f8" stroke-width="2" stroke-linecap="round" shape-rendering="auto"/><path d="M3.7 13.2 L12 4.9" stroke="#ffffff" stroke-width="0.9" shape-rendering="auto"/><path d="M12.9 1.6 A2 2 0 1 0 15.3 4" stroke="#101018" stroke-width="1.5" fill="none" shape-rendering="auto"/><path d="M13 2.4 A1.3 1.3 0 1 0 14.6 3.8" stroke="#d8d8d8" stroke-width="0.6" fill="none" shape-rendering="auto"/></svg>
<div style="position:absolute;left:63px;top:281px;white-space:pre;font-size:11px;line-height:20px;font-weight:400;color:#000;transform:scaleX(1.0000);transform-origin:1px 0;">Product-Overrides</div>
<div style="position:absolute;left:38px;top:308px;width:1px;height:1px;background:#808080;"></div>
<div style="position:absolute;left:40px;top:308px;width:1px;height:1px;background:#808080;"></div>
<div style="position:absolute;left:42px;top:308px;width:1px;height:1px;background:#808080;"></div>
<div style="position:absolute;left:44px;top:308px;width:1px;height:1px;background:#808080;"></div>
<div style="position:absolute;left:29px;top:304px;width:7px;height:7px;border:1px solid #a0a0a0;background:#fff"></div>
<div style="position:absolute;left:31px;top:308px;width:5px;height:1px;background:#000;"></div>
<div style="position:absolute;left:33px;top:306px;width:1px;height:5px;background:#000;"></div>
<svg style="position:absolute;left:44px;top:300px;overflow:visible" width="18" height="16" viewBox="0 0 18 16" shape-rendering="crispEdges"><rect x="2" y="2" width="4" height="1" fill="#7a7a7a"/><rect x="7" y="2" width="4" height="1" fill="#9a9a9a"/><rect x="0" y="3" width="14" height="10" fill="#90ee90"/><rect x="0" y="3" width="1" height="10" fill="#606060"/><rect x="1" y="3" width="12" height="1" fill="#7a7a7a"/><rect x="1" y="4" width="11" height="1" fill="#ffffff"/><rect x="1" y="5" width="1" height="7" fill="#ffffff"/><rect x="2" y="5" width="10" height="1" fill="#5cc85c"/><rect x="0" y="12" width="14" height="1" fill="#000"/><rect x="13" y="4" width="1" height="9" fill="#000"/><path d="M4.6 14.1 L12.8 5.9" stroke="#101018" stroke-width="2.6" stroke-linecap="round" shape-rendering="auto"/><path d="M4.1 13.5 L12.4 5.2" stroke="#a4d2f8" stroke-width="2" stroke-linecap="round" shape-rendering="auto"/><path d="M3.7 13.2 L12 4.9" stroke="#ffffff" stroke-width="0.9" shape-rendering="auto"/><path d="M12.9 1.6 A2 2 0 1 0 15.3 4" stroke="#101018" stroke-width="1.5" fill="none" shape-rendering="auto"/><path d="M13 2.4 A1.3 1.3 0 1 0 14.6 3.8" stroke="#d8d8d8" stroke-width="0.6" fill="none" shape-rendering="auto"/></svg>
<div style="position:absolute;left:63px;top:298px;white-space:pre;font-size:11px;line-height:20px;font-weight:400;color:#000;transform:scaleX(0.9929);transform-origin:1px 0;">Publication group types</div>
<div style="position:absolute;left:38px;top:325px;width:1px;height:1px;background:#808080;"></div>
<div style="position:absolute;left:40px;top:325px;width:1px;height:1px;background:#808080;"></div>
<div style="position:absolute;left:42px;top:325px;width:1px;height:1px;background:#808080;"></div>
<div style="position:absolute;left:44px;top:325px;width:1px;height:1px;background:#808080;"></div>
<div style="position:absolute;left:29px;top:321px;width:7px;height:7px;border:1px solid #a0a0a0;background:#fff"></div>
<div style="position:absolute;left:31px;top:325px;width:5px;height:1px;background:#000;"></div>
<div style="position:absolute;left:33px;top:323px;width:1px;height:5px;background:#000;"></div>
<svg style="position:absolute;left:44px;top:317px;overflow:visible" width="18" height="16" viewBox="0 0 18 16" shape-rendering="crispEdges"><rect x="2" y="2" width="4" height="1" fill="#7a7a7a"/><rect x="7" y="2" width="4" height="1" fill="#9a9a9a"/><rect x="0" y="3" width="14" height="10" fill="#90ee90"/><rect x="0" y="3" width="1" height="10" fill="#606060"/><rect x="1" y="3" width="12" height="1" fill="#7a7a7a"/><rect x="1" y="4" width="11" height="1" fill="#ffffff"/><rect x="1" y="5" width="1" height="7" fill="#ffffff"/><rect x="2" y="5" width="10" height="1" fill="#5cc85c"/><rect x="0" y="12" width="14" height="1" fill="#000"/><rect x="13" y="4" width="1" height="9" fill="#000"/><path d="M4.6 14.1 L12.8 5.9" stroke="#101018" stroke-width="2.6" stroke-linecap="round" shape-rendering="auto"/><path d="M4.1 13.5 L12.4 5.2" stroke="#a4d2f8" stroke-width="2" stroke-linecap="round" shape-rendering="auto"/><path d="M3.7 13.2 L12 4.9" stroke="#ffffff" stroke-width="0.9" shape-rendering="auto"/><path d="M12.9 1.6 A2 2 0 1 0 15.3 4" stroke="#101018" stroke-width="1.5" fill="none" shape-rendering="auto"/><path d="M13 2.4 A1.3 1.3 0 1 0 14.6 3.8" stroke="#d8d8d8" stroke-width="0.6" fill="none" shape-rendering="auto"/></svg>
<div style="position:absolute;left:63px;top:315px;white-space:pre;font-size:11px;line-height:20px;font-weight:400;color:#000;transform:scaleX(0.9833);transform-origin:1px 0;">Publication section types</div>
<div style="position:absolute;left:38px;top:342px;width:1px;height:1px;background:#808080;"></div>
<div style="position:absolute;left:40px;top:342px;width:1px;height:1px;background:#808080;"></div>
<div style="position:absolute;left:42px;top:342px;width:1px;height:1px;background:#808080;"></div>
<div style="position:absolute;left:44px;top:342px;width:1px;height:1px;background:#808080;"></div>
<div style="position:absolute;left:29px;top:338px;width:7px;height:7px;border:1px solid #a0a0a0;background:#fff"></div>
<div style="position:absolute;left:31px;top:342px;width:5px;height:1px;background:#000;"></div>
<div style="position:absolute;left:33px;top:340px;width:1px;height:5px;background:#000;"></div>
<svg style="position:absolute;left:44px;top:334px;overflow:visible" width="18" height="16" viewBox="0 0 18 16" shape-rendering="crispEdges"><rect x="2" y="2" width="4" height="1" fill="#7a7a7a"/><rect x="7" y="2" width="4" height="1" fill="#9a9a9a"/><rect x="0" y="3" width="14" height="10" fill="#90ee90"/><rect x="0" y="3" width="1" height="10" fill="#606060"/><rect x="1" y="3" width="12" height="1" fill="#7a7a7a"/><rect x="1" y="4" width="11" height="1" fill="#ffffff"/><rect x="1" y="5" width="1" height="7" fill="#ffffff"/><rect x="2" y="5" width="10" height="1" fill="#5cc85c"/><rect x="0" y="12" width="14" height="1" fill="#000"/><rect x="13" y="4" width="1" height="9" fill="#000"/><path d="M4.6 14.1 L12.8 5.9" stroke="#101018" stroke-width="2.6" stroke-linecap="round" shape-rendering="auto"/><path d="M4.1 13.5 L12.4 5.2" stroke="#a4d2f8" stroke-width="2" stroke-linecap="round" shape-rendering="auto"/><path d="M3.7 13.2 L12 4.9" stroke="#ffffff" stroke-width="0.9" shape-rendering="auto"/><path d="M12.9 1.6 A2 2 0 1 0 15.3 4" stroke="#101018" stroke-width="1.5" fill="none" shape-rendering="auto"/><path d="M13 2.4 A1.3 1.3 0 1 0 14.6 3.8" stroke="#d8d8d8" stroke-width="0.6" fill="none" shape-rendering="auto"/></svg>
<div style="position:absolute;left:63px;top:332px;white-space:pre;font-size:11px;line-height:20px;font-weight:400;color:#000;transform:scaleX(0.9841);transform-origin:1px 0;">Publication types</div>
<div style="position:absolute;left:38px;top:359px;width:1px;height:1px;background:#808080;"></div>
<div style="position:absolute;left:40px;top:359px;width:1px;height:1px;background:#808080;"></div>
<div style="position:absolute;left:42px;top:359px;width:1px;height:1px;background:#808080;"></div>
<div style="position:absolute;left:44px;top:359px;width:1px;height:1px;background:#808080;"></div>
<div style="position:absolute;left:29px;top:355px;width:7px;height:7px;border:1px solid #a0a0a0;background:#fff"></div>
<div style="position:absolute;left:31px;top:359px;width:5px;height:1px;background:#000;"></div>
<div style="position:absolute;left:33px;top:357px;width:1px;height:5px;background:#000;"></div>
<svg style="position:absolute;left:44px;top:351px;overflow:visible" width="18" height="16" viewBox="0 0 18 16" shape-rendering="crispEdges"><rect x="2" y="2" width="4" height="1" fill="#7a7a7a"/><rect x="7" y="2" width="4" height="1" fill="#9a9a9a"/><rect x="0" y="3" width="14" height="10" fill="#90ee90"/><rect x="0" y="3" width="1" height="10" fill="#606060"/><rect x="1" y="3" width="12" height="1" fill="#7a7a7a"/><rect x="1" y="4" width="11" height="1" fill="#ffffff"/><rect x="1" y="5" width="1" height="7" fill="#ffffff"/><rect x="2" y="5" width="10" height="1" fill="#5cc85c"/><rect x="0" y="12" width="14" height="1" fill="#000"/><rect x="13" y="4" width="1" height="9" fill="#000"/><path d="M4.6 14.1 L12.8 5.9" stroke="#101018" stroke-width="2.6" stroke-linecap="round" shape-rendering="auto"/><path d="M4.1 13.5 L12.4 5.2" stroke="#a4d2f8" stroke-width="2" stroke-linecap="round" shape-rendering="auto"/><path d="M3.7 13.2 L12 4.9" stroke="#ffffff" stroke-width="0.9" shape-rendering="auto"/><path d="M12.9 1.6 A2 2 0 1 0 15.3 4" stroke="#101018" stroke-width="1.5" fill="none" shape-rendering="auto"/><path d="M13 2.4 A1.3 1.3 0 1 0 14.6 3.8" stroke="#d8d8d8" stroke-width="0.6" fill="none" shape-rendering="auto"/></svg>
<div style="position:absolute;left:63px;top:349px;white-space:pre;font-size:11px;line-height:20px;font-weight:400;color:#000;transform:scaleX(1.0131);transform-origin:1px 0;">Setup Group type root</div>
<div style="position:absolute;left:38px;top:376px;width:1px;height:1px;background:#808080;"></div>
<div style="position:absolute;left:40px;top:376px;width:1px;height:1px;background:#808080;"></div>
<div style="position:absolute;left:42px;top:376px;width:1px;height:1px;background:#808080;"></div>
<div style="position:absolute;left:44px;top:376px;width:1px;height:1px;background:#808080;"></div>
<div style="position:absolute;left:29px;top:372px;width:7px;height:7px;border:1px solid #a0a0a0;background:#fff"></div>
<div style="position:absolute;left:31px;top:376px;width:5px;height:1px;background:#000;"></div>
<div style="position:absolute;left:33px;top:374px;width:1px;height:5px;background:#000;"></div>
<svg style="position:absolute;left:44px;top:368px;overflow:visible" width="18" height="16" viewBox="0 0 18 16" shape-rendering="crispEdges"><rect x="2" y="2" width="4" height="1" fill="#7a7a7a"/><rect x="7" y="2" width="4" height="1" fill="#9a9a9a"/><rect x="0" y="3" width="14" height="10" fill="#90ee90"/><rect x="0" y="3" width="1" height="10" fill="#606060"/><rect x="1" y="3" width="12" height="1" fill="#7a7a7a"/><rect x="1" y="4" width="11" height="1" fill="#ffffff"/><rect x="1" y="5" width="1" height="7" fill="#ffffff"/><rect x="2" y="5" width="10" height="1" fill="#5cc85c"/><rect x="0" y="12" width="14" height="1" fill="#000"/><rect x="13" y="4" width="1" height="9" fill="#000"/><path d="M4.6 14.1 L12.8 5.9" stroke="#101018" stroke-width="2.6" stroke-linecap="round" shape-rendering="auto"/><path d="M4.1 13.5 L12.4 5.2" stroke="#a4d2f8" stroke-width="2" stroke-linecap="round" shape-rendering="auto"/><path d="M3.7 13.2 L12 4.9" stroke="#ffffff" stroke-width="0.9" shape-rendering="auto"/><path d="M12.9 1.6 A2 2 0 1 0 15.3 4" stroke="#101018" stroke-width="1.5" fill="none" shape-rendering="auto"/><path d="M13 2.4 A1.3 1.3 0 1 0 14.6 3.8" stroke="#d8d8d8" stroke-width="0.6" fill="none" shape-rendering="auto"/></svg>
<div style="position:absolute;left:63px;top:366px;white-space:pre;font-size:11px;line-height:20px;font-weight:400;color:#000;transform:scaleX(0.9515);transform-origin:0px 0;">TShirt business Rule</div>
<div style="position:absolute;left:19px;top:393px;width:1px;height:1px;background:#808080;"></div>
<div style="position:absolute;left:21px;top:393px;width:1px;height:1px;background:#808080;"></div>
<div style="position:absolute;left:23px;top:393px;width:1px;height:1px;background:#808080;"></div>
<div style="position:absolute;left:25px;top:393px;width:1px;height:1px;background:#808080;"></div>
<div style="position:absolute;left:10px;top:389px;width:7px;height:7px;border:1px solid #a0a0a0;background:#fff"></div>
<div style="position:absolute;left:12px;top:393px;width:5px;height:1px;background:#000;"></div>
<div style="position:absolute;left:14px;top:391px;width:1px;height:5px;background:#000;"></div>
<svg style="position:absolute;left:25px;top:385px;overflow:visible" width="16" height="17" viewBox="0 0 16 17"><path d="M0.5 1.5 H3 L4 0.5 H7 L8 1.5 H12.5 V10.5 H0.5 Z" fill="#a8e8a0" stroke="#6a7a6a"/><rect x="1" y="2" width="11" height="1" fill="#e8ffe8"/><rect x="4.5" y="5.5" width="11" height="10" fill="#90e890" stroke="#3a3a3a"/><rect x="5" y="6" width="10" height="2" fill="#e0f4e0"/><rect x="4" y="15" width="12" height="1" fill="#000"/><rect x="15" y="6" width="1" height="10" fill="#000"/><path d="M8.5 9.5 L6.8 11.5 L8.5 13.5 M11.5 9.5 L13.2 11.5 L11.5 13.5" stroke="#000" stroke-width="1.2" fill="none"/></svg>
<div style="position:absolute;left:44px;top:383px;white-space:pre;font-size:11px;line-height:20px;font-weight:400;color:#000;transform:scaleX(1.0000);transform-origin:0px 0;">Tags</div>
<div style="position:absolute;left:19px;top:410px;width:1px;height:1px;background:#808080;"></div>
<div style="position:absolute;left:21px;top:410px;width:1px;height:1px;background:#808080;"></div>
<div style="position:absolute;left:23px;top:410px;width:1px;height:1px;background:#808080;"></div>
<div style="position:absolute;left:25px;top:410px;width:1px;height:1px;background:#808080;"></div>
<div style="position:absolute;left:10px;top:406px;width:7px;height:7px;border:1px solid #a0a0a0;background:#fff"></div>
<div style="position:absolute;left:12px;top:410px;width:5px;height:1px;background:#000;"></div>
<div style="position:absolute;left:14px;top:408px;width:1px;height:5px;background:#000;"></div>
<svg style="position:absolute;left:25px;top:402px;overflow:visible" width="17" height="16" viewBox="0 0 17 16"><path d="M0.5 12.5 L13.5 2 L16.5 5.5 L3.5 16 Z" fill="#90e080" stroke="#1a3a1a"/><path d="M1.5 12.5 L13.5 3" stroke="#d8ffd0" stroke-width="0.8"/><rect x="5" y="10.5" width="1.3" height="1.3" fill="#1a3a1a"/><rect x="7.6" y="8.4" width="1.3" height="1.3" fill="#1a3a1a"/><rect x="10.2" y="6.3" width="1.3" height="1.3" fill="#1a3a1a"/><rect x="12.8" y="4.2" width="1.3" height="1.3" fill="#1a3a1a"/></svg>
<div style="position:absolute;left:44px;top:400px;white-space:pre;font-size:11px;line-height:20px;font-weight:400;color:#000;transform:scaleX(1.0000);transform-origin:1px 0;">Units</div>
<div style="position:absolute;left:19px;top:427px;width:1px;height:1px;background:#808080;"></div>
<div style="position:absolute;left:21px;top:427px;width:1px;height:1px;background:#808080;"></div>
<div style="position:absolute;left:23px;top:427px;width:1px;height:1px;background:#808080;"></div>
<div style="position:absolute;left:25px;top:427px;width:1px;height:1px;background:#808080;"></div>
<div style="position:absolute;left:10px;top:423px;width:7px;height:7px;border:1px solid #a0a0a0;background:#fff"></div>
<div style="position:absolute;left:12px;top:427px;width:5px;height:1px;background:#000;"></div>
<div style="position:absolute;left:14px;top:425px;width:1px;height:5px;background:#000;"></div>
<svg style="position:absolute;left:25px;top:419px;overflow:visible" width="17" height="17" viewBox="0 0 17 17"><path d="M0.5 16 V10 L4 8 H12 L16 10 V16 Z" fill="#7cdc7c" stroke="#2a6a2a"/><path d="M6 9 L8.3 13 L10.6 9 Z" fill="#ffffff"/><circle cx="5" cy="3.6" r="2.8" fill="#f4b0b0" stroke="#5a3a3a" stroke-width="0.9"/><circle cx="11" cy="3.6" r="2.8" fill="#f4b0b0" stroke="#5a3a3a" stroke-width="0.9"/><circle cx="8.2" cy="7.4" r="2.9" fill="#f8c0c0" stroke="#3a2020" stroke-width="1"/></svg>
<div style="position:absolute;left:44px;top:417px;white-space:pre;font-size:11px;line-height:20px;font-weight:400;color:#000;transform:scaleX(0.9597);transform-origin:1px 0;">Users &amp; Groups</div>
<div style="position:absolute;left:19px;top:444px;width:1px;height:1px;background:#808080;"></div>
<div style="position:absolute;left:21px;top:444px;width:1px;height:1px;background:#808080;"></div>
<div style="position:absolute;left:23px;top:444px;width:1px;height:1px;background:#808080;"></div>
<div style="position:absolute;left:25px;top:444px;width:1px;height:1px;background:#808080;"></div>
<div style="position:absolute;left:10px;top:440px;width:7px;height:7px;border:1px solid #a0a0a0;background:#fff"></div>
<div style="position:absolute;left:12px;top:444px;width:5px;height:1px;background:#000;"></div>
<div style="position:absolute;left:14px;top:442px;width:1px;height:5px;background:#000;"></div>
<svg style="position:absolute;left:25px;top:436px;overflow:visible" width="17" height="17" viewBox="0 0 17 17"><rect x="0.5" y="0.5" width="8" height="8" fill="#3cc83c" stroke="#000"/><rect x="2.5" y="2.5" width="3" height="3" fill="#1a5a1a" stroke="#000" stroke-width="0.8"/><path d="M5 5 L11.5 11.5" stroke="#000" stroke-width="1.3"/><path d="M12 9 L12 12 L9 12 Z" fill="#000"/><rect x="11.5" y="11.5" width="4" height="4" fill="#18c060" stroke="#000"/></svg>
<div style="position:absolute;left:44px;top:434px;white-space:pre;font-size:11px;line-height:20px;font-weight:400;color:#000;transform:scaleX(0.9927);transform-origin:1px 0;">Reference Types</div>
<div style="position:absolute;left:19px;top:461px;width:1px;height:1px;background:#808080;"></div>
<div style="position:absolute;left:21px;top:461px;width:1px;height:1px;background:#808080;"></div>
<div style="position:absolute;left:23px;top:461px;width:1px;height:1px;background:#808080;"></div>
<div style="position:absolute;left:25px;top:461px;width:1px;height:1px;background:#808080;"></div>
<div style="position:absolute;left:10px;top:457px;width:7px;height:7px;border:1px solid #a0a0a0;background:#fff"></div>
<div style="position:absolute;left:12px;top:461px;width:5px;height:1px;background:#000;"></div>
<div style="position:absolute;left:14px;top:459px;width:1px;height:5px;background:#000;"></div>
<svg style="position:absolute;left:25px;top:453px;overflow:visible" width="15" height="15" viewBox="0 0 15 15"><path d="M1.5 -0.3999999999999999 L3.4 1.5 L1.5 3.4 L-0.3999999999999999 1.5 Z" fill="#000"/><rect x="1.0" y="1.0" width="1" height="1" fill="#33cc33"/><path d="M1.5 5.6 L3.4 7.5 L1.5 9.4 L-0.3999999999999999 7.5 Z" fill="#000"/><rect x="1.0" y="7.0" width="1" height="1" fill="#33cc33"/><path d="M1.5 11.6 L3.4 13.5 L1.5 15.4 L-0.3999999999999999 13.5 Z" fill="#000"/><rect x="1.0" y="13.0" width="1" height="1" fill="#33cc33"/><path d="M7.5 -0.3999999999999999 L9.4 1.5 L7.5 3.4 L5.6 1.5 Z" fill="#000"/><rect x="7.0" y="1.0" width="1" height="1" fill="#33cc33"/><path d="M7.5 5.6 L9.4 7.5 L7.5 9.4 L5.6 7.5 Z" fill="#000"/><rect x="7.0" y="7.0" width="1" height="1" fill="#33cc33"/><path d="M7.5 11.6 L9.4 13.5 L7.5 15.4 L5.6 13.5 Z" fill="#000"/><rect x="7.0" y="13.0" width="1" height="1" fill="#33cc33"/><path d="M13.5 -0.3999999999999999 L15.4 1.5 L13.5 3.4 L11.6 1.5 Z" fill="#000"/><rect x="13.0" y="1.0" width="1" height="1" fill="#33cc33"/><path d="M13.5 5.6 L15.4 7.5 L13.5 9.4 L11.6 7.5 Z" fill="#000"/><rect x="13.0" y="7.0" width="1" height="1" fill="#33cc33"/><path d="M13.5 11.6 L15.4 13.5 L13.5 15.4 L11.6 13.5 Z" fill="#000"/><rect x="13.0" y="13.0" width="1" height="1" fill="#33cc33"/><rect x="4" y="1" width="1" height="1" fill="#55dd55"/><rect x="10" y="1" width="1" height="1" fill="#55dd55"/><rect x="4" y="7" width="1" height="1" fill="#55dd55"/><rect x="10" y="7" width="1" height="1" fill="#55dd55"/><rect x="4" y="13" width="1" height="1" fill="#55dd55"/><rect x="10" y="13" width="1" height="1" fill="#55dd55"/><rect x="1" y="4" width="1" height="1" fill="#55dd55"/><rect x="4" y="4" width="1" height="1" fill="#55dd55"/><rect x="7" y="4" width="1" height="1" fill="#55dd55"/><rect x="10" y="4" width="1" height="1" fill="#55dd55"/><rect x="13" y="4" width="1" height="1" fill="#55dd55"/><rect x="1" y="10" width="1" height="1" fill="#55dd55"/><rect x="4" y="10" width="1" height="1" fill="#55dd55"/><rect x="7" y="10" width="1" height="1" fill="#55dd55"/><rect x="10" y="10" width="1" height="1" fill="#55dd55"/><rect x="13" y="10" width="1" height="1" fill="#55dd55"/></svg>
<div style="position:absolute;left:44px;top:451px;white-space:pre;font-size:11px;line-height:20px;font-weight:400;color:#000;transform:scaleX(0.9600);transform-origin:0px 0;">Workspaces</div>
<div style="position:absolute;left:19px;top:478px;width:1px;height:1px;background:#808080;"></div>
<div style="position:absolute;left:21px;top:478px;width:1px;height:1px;background:#808080;"></div>
<div style="position:absolute;left:23px;top:478px;width:1px;height:1px;background:#808080;"></div>
<div style="position:absolute;left:25px;top:478px;width:1px;height:1px;background:#808080;"></div>
<div style="position:absolute;left:10px;top:474px;width:7px;height:7px;border:1px solid #a0a0a0;background:#fff"></div>
<div style="position:absolute;left:12px;top:478px;width:5px;height:1px;background:#000;"></div>
<div style="position:absolute;left:14px;top:476px;width:1px;height:5px;background:#000;"></div>
<div style="position:absolute;left:31px;top:471px;width:10px;height:1px;background:#33bb33;"></div>
<div style="position:absolute;left:31px;top:472px;width:1px;height:1px;background:#33bb33;"></div>
<div style="position:absolute;left:35px;top:472px;width:1px;height:1px;background:#33bb33;"></div>
<div style="position:absolute;left:38px;top:472px;width:1px;height:1px;background:#33bb33;"></div>
<div style="position:absolute;left:40px;top:472px;width:1px;height:1px;background:#33bb33;"></div>
<div style="position:absolute;left:250px;top:1px;width:405px;height:24px;background:#757575;"></div>
<div style="position:absolute;left:250px;top:1px;width:2px;height:472px;background:#6a6a6a;"></div>
<svg style="position:absolute;left:255px;top:6px;overflow:visible" width="13" height="15" viewBox="0 0 13 15"><path d="M10 1.1 L3.3 7.1 L10 13.1" stroke="#fff" stroke-width="3.5" fill="none"/></svg>
<div style="position:absolute;left:278px;top:3px;white-space:pre;font-size:16.5px;line-height:20px;font-weight:400;color:#ffffff;transform:scaleX(1.0062);transform-origin:1px 0;">Primary Product Classification - Object Type</div>
<svg style="position:absolute;left:629px;top:7px;overflow:visible" width="20" height="13" viewBox="0 0 20 13"><rect x="0" y="5.4" width="6.5" height="1.3" fill="#fff"/><rect x="4" y="4.6" width="2.5" height="1" fill="#fff"/><path d="M7 0.3 L11 3 H16.2 V9.2 H11 L7 11.8 Z" fill="#fff"/><rect x="11.6" y="4.6" width="2" height="2.6" fill="#757575"/><rect x="17.2" y="3" width="2.2" height="6" fill="#fff"/></svg>
<div style="position:absolute;left:256px;top:26px;width:84px;height:19px;background:#737373;border-radius:3px 1px 0 0"></div>
<div style="position:absolute;left:262px;top:25px;white-space:pre;font-size:11px;line-height:20px;font-weight:700;color:#ffffff;letter-spacing:0.66px;">Object Type</div>
<div style="position:absolute;left:343px;top:26px;width:72px;height:19px;border:1px solid #858585;border-bottom:none;border-radius:2px 2px 0 0;background:#fff;box-sizing:border-box"></div>
<div style="position:absolute;left:351px;top:26px;white-space:pre;font-size:11px;line-height:20px;font-weight:400;color:#000;">References</div>
<div style="position:absolute;left:417px;top:26px;width:34px;height:19px;border:1px solid #858585;border-bottom:none;border-radius:2px 2px 0 0;background:#fff;box-sizing:border-box"></div>
<div style="position:absolute;left:426px;top:26px;white-space:pre;font-size:11px;line-height:20px;font-weight:400;color:#000;">Log</div>
<div style="position:absolute;left:426px;top:41px;width:5px;height:1px;background:#000;"></div>
<div style="position:absolute;left:252px;top:47px;width:403px;height:1px;background:#a0a0a0;"></div>
<div style="position:absolute;left:271px;top:50px;width:384px;height:16px;background:#b4b4b4;"></div>
<div style="position:absolute;left:270px;top:48px;white-space:pre;font-size:11px;line-height:20px;font-weight:400;color:#000;">Description</div>
<svg style="position:absolute;left:256px;top:52px;overflow:visible" width="10" height="14" viewBox="0 0 10 14"><circle cx="4.5" cy="4.5" r="3.6" fill="#c8dcec" stroke="#000" stroke-width="1.3"/><rect x="3.5" y="3.5" width="2" height="2" fill="#000"/><rect x="3.5" y="8" width="2" height="5" fill="#000"/></svg>
<div style="position:absolute;left:254px;top:66px;width:401px;height:1px;background:#a0a0a0;"></div>
<div style="position:absolute;left:254px;top:67px;width:401px;height:21px;background:#fff;"></div>
<div style="position:absolute;left:271px;top:67px;white-space:pre;font-size:11px;line-height:20px;font-weight:400;color:#000;">Name</div>
<svg style="position:absolute;left:401px;top:74px;overflow:visible" width="6" height="7" viewBox="0 0 6 7"><path d="M0.8 0.8 L4.5 3.5 L0.8 6.2" stroke="#7a7a7a" stroke-width="1.4" fill="none"/></svg>
<svg style="position:absolute;left:417px;top:74px;overflow:visible" width="6" height="7" viewBox="0 0 6 7"><path d="M0.8 0.8 L4.5 3.5 L0.8 6.2" stroke="#7a7a7a" stroke-width="1.4" fill="none"/></svg>
<div style="position:absolute;left:431px;top:67px;white-space:pre;font-size:11px;line-height:20px;font-weight:400;color:#000;">Value</div>
<svg style="position:absolute;left:645px;top:74px;overflow:visible" width="6" height="7" viewBox="0 0 6 7"><path d="M0.8 0.8 L4.5 3.5 L0.8 6.2" stroke="#7a7a7a" stroke-width="1.4" fill="none"/></svg>
<div style="position:absolute;left:254px;top:88px;width:401px;height:1px;background:#a0a0a0;"></div>
<div style="position:absolute;left:271px;top:89px;width:139px;height:21px;background:#fff8c5;"></div>
<div style="position:absolute;left:411px;top:89px;width:19px;height:21px;background:#fff8c5;"></div>
<div style="position:absolute;left:431px;top:89px;width:223px;height:21px;background:#fff8c5;"></div>
<svg style="position:absolute;left:259px;top:95px;overflow:visible" width="6" height="7" viewBox="0 0 6 7"><path d="M0.8 0.8 L4.5 3.5 L0.8 6.2" stroke="#7a7a7a" stroke-width="1.4" fill="none"/></svg>
<div style="position:absolute;left:270px;top:89px;white-space:pre;font-size:11px;line-height:20px;font-weight:400;color:#000;transform:scaleX(1.0300);transform-origin:1px 0;">ID</div>
<div style="position:absolute;left:430px;top:89px;white-space:pre;font-size:11px;line-height:20px;font-weight:400;color:#000;transform:scaleX(1.0185);transform-origin:1px 0;">Product user-type root</div>
<div style="position:absolute;left:254px;top:110px;width:401px;height:1px;background:#a0a0a0;"></div>
<div style="position:absolute;left:271px;top:111px;width:139px;height:21px;background:#fff8c5;"></div>
<div style="position:absolute;left:411px;top:111px;width:19px;height:21px;background:#fff8c5;"></div>
<svg style="position:absolute;left:259px;top:117px;overflow:visible" width="6" height="7" viewBox="0 0 6 7"><path d="M0.8 0.8 L4.5 3.5 L0.8 6.2" stroke="#7a7a7a" stroke-width="1.4" fill="none"/></svg>
<div style="position:absolute;left:270px;top:111px;white-space:pre;font-size:11px;line-height:20px;font-weight:400;color:#000;transform:scaleX(0.9286);transform-origin:1px 0;">Name</div>
<div style="position:absolute;left:430px;top:111px;white-space:pre;font-size:11px;line-height:20px;font-weight:400;color:#000;transform:scaleX(0.9690);transform-origin:1px 0;">Primary Product Classification</div>
<div style="position:absolute;left:254px;top:132px;width:401px;height:1px;background:#a0a0a0;"></div>
<div style="position:absolute;left:271px;top:133px;width:139px;height:21px;background:#fff8c5;"></div>
<div style="position:absolute;left:411px;top:133px;width:19px;height:21px;background:#fff8c5;"></div>
<div style="position:absolute;left:431px;top:133px;width:223px;height:21px;background:#fff8c5;"></div>
<svg style="position:absolute;left:259px;top:139px;overflow:visible" width="6" height="7" viewBox="0 0 6 7"><path d="M0.8 0.8 L4.5 3.5 L0.8 6.2" stroke="#7a7a7a" stroke-width="1.4" fill="none"/></svg>
<div style="position:absolute;left:270px;top:133px;white-space:pre;font-size:11px;line-height:20px;font-weight:400;color:#000;transform:scaleX(0.9897);transform-origin:1px 0;">Last edited by</div>
<div style="position:absolute;left:430px;top:133px;white-space:pre;font-size:11px;line-height:20px;font-weight:400;color:#000;transform:scaleX(0.9747);transform-origin:0px 0;">2017-07-11 13:26:26 by USERM</div>
<div style="position:absolute;left:254px;top:154px;width:401px;height:1px;background:#a0a0a0;"></div>
<div style="position:absolute;left:271px;top:155px;width:139px;height:21px;background:#fff8c5;"></div>
<div style="position:absolute;left:411px;top:155px;width:19px;height:21px;background:#fff8c5;"></div>
<svg style="position:absolute;left:259px;top:161px;overflow:visible" width="6" height="7" viewBox="0 0 6 7"><path d="M0.8 0.8 L4.5 3.5 L0.8 6.2" stroke="#7a7a7a" stroke-width="1.4" fill="none"/></svg>
<div style="position:absolute;left:270px;top:155px;white-space:pre;font-size:11px;line-height:20px;font-weight:400;color:#000;transform:scaleX(0.9848);transform-origin:1px 0;">Name Pattern</div>
<div style="position:absolute;left:254px;top:176px;width:401px;height:1px;background:#a0a0a0;"></div>
<div style="position:absolute;left:271px;top:177px;width:139px;height:21px;background:#fff8c5;"></div>
<div style="position:absolute;left:411px;top:177px;width:19px;height:21px;background:#fff8c5;"></div>
<svg style="position:absolute;left:259px;top:183px;overflow:visible" width="6" height="7" viewBox="0 0 6 7"><path d="M0.8 0.8 L4.5 3.5 L0.8 6.2" stroke="#7a7a7a" stroke-width="1.4" fill="none"/></svg>
<div style="position:absolute;left:270px;top:177px;white-space:pre;font-size:11px;line-height:20px;font-weight:400;color:#000;transform:scaleX(1.0250);transform-origin:1px 0;">ID Pattern</div>
<div style="position:absolute;left:430px;top:177px;white-space:pre;font-size:11px;line-height:20px;font-weight:400;color:#000;transform:scaleX(0.9842);transform-origin:1px 0;">Primary Product [id]</div>
<div style="position:absolute;left:254px;top:198px;width:401px;height:1px;background:#a0a0a0;"></div>
<div style="position:absolute;left:271px;top:199px;width:139px;height:21px;background:#fff8c5;"></div>
<div style="position:absolute;left:411px;top:199px;width:19px;height:21px;background:#fff8c5;"></div>
<svg style="position:absolute;left:259px;top:205px;overflow:visible" width="6" height="7" viewBox="0 0 6 7"><path d="M0.8 0.8 L4.5 3.5 L0.8 6.2" stroke="#7a7a7a" stroke-width="1.4" fill="none"/></svg>
<div style="position:absolute;left:270px;top:199px;white-space:pre;font-size:11px;line-height:20px;font-weight:400;color:#000;transform:scaleX(0.9795);transform-origin:1px 0;">Manually Sorted</div>
<div style="position:absolute;left:430px;top:199px;white-space:pre;font-size:11px;line-height:20px;font-weight:400;color:#000;transform:scaleX(0.9692);transform-origin:1px 0;">No</div>
<div style="position:absolute;left:254px;top:220px;width:401px;height:1px;background:#a0a0a0;"></div>
<div style="position:absolute;left:271px;top:221px;width:139px;height:21px;background:#fff8c5;"></div>
<div style="position:absolute;left:411px;top:221px;width:19px;height:21px;background:#fff8c5;"></div>
<svg style="position:absolute;left:259px;top:227px;overflow:visible" width="6" height="7" viewBox="0 0 6 7"><path d="M0.8 0.8 L4.5 3.5 L0.8 6.2" stroke="#7a7a7a" stroke-width="1.4" fill="none"/></svg>
<div style="position:absolute;left:270px;top:221px;white-space:pre;font-size:11px;line-height:20px;font-weight:400;color:#000;transform:scaleX(0.9539);transform-origin:1px 0;">Enable Profiling</div>
<div style="position:absolute;left:430px;top:221px;white-space:pre;font-size:11px;line-height:20px;font-weight:400;color:#000;transform:scaleX(0.9692);transform-origin:1px 0;">No</div>
<div style="position:absolute;left:254px;top:242px;width:401px;height:1px;background:#a0a0a0;"></div>
<div style="position:absolute;left:271px;top:243px;width:139px;height:21px;background:#fff8c5;"></div>
<div style="position:absolute;left:411px;top:243px;width:19px;height:21px;background:#fff8c5;"></div>
<svg style="position:absolute;left:259px;top:249px;overflow:visible" width="6" height="7" viewBox="0 0 6 7"><path d="M0.8 0.8 L4.5 3.5 L0.8 6.2" stroke="#7a7a7a" stroke-width="1.4" fill="none"/></svg>
<div style="position:absolute;left:270px;top:243px;white-space:pre;font-size:11px;line-height:20px;font-weight:400;color:#000;transform:scaleX(0.9877);transform-origin:1px 0;">InDesign Template Allowed</div>
<div style="position:absolute;left:430px;top:243px;white-space:pre;font-size:11px;line-height:20px;font-weight:400;color:#000;transform:scaleX(0.9000);transform-origin:0px 0;">Yes</div>
<div style="position:absolute;left:254px;top:264px;width:401px;height:1px;background:#a0a0a0;"></div>
<div style="position:absolute;left:271px;top:265px;width:139px;height:21px;background:#fff8c5;"></div>
<div style="position:absolute;left:411px;top:265px;width:19px;height:21px;background:#fff8c5;"></div>
<svg style="position:absolute;left:259px;top:271px;overflow:visible" width="6" height="7" viewBox="0 0 6 7"><path d="M0.8 0.8 L4.5 3.5 L0.8 6.2" stroke="#7a7a7a" stroke-width="1.4" fill="none"/></svg>
<div style="position:absolute;left:270px;top:265px;white-space:pre;font-size:11px;line-height:20px;font-weight:400;color:#000;transform:scaleX(1.0737);transform-origin:1px 0;">Icon</div>
<svg style="position:absolute;left:431px;top:267px;overflow:visible" width="16" height="16" viewBox="0 0 16 16"><path d="M7.5 3.5 H13.5 V5.5 H7.5 Z" fill="#ffffff" stroke="#2a4a6a"/><rect x="0.5" y="4.5" width="15" height="11" fill="#88c0f8" stroke="#2a4a6a"/><rect x="1" y="5" width="14" height="1" fill="#b8dcff"/></svg>
<div style="position:absolute;left:254px;top:286px;width:401px;height:1px;background:#a0a0a0;"></div>
<div style="position:absolute;left:271px;top:287px;width:139px;height:21px;background:#fff8c5;"></div>
<div style="position:absolute;left:411px;top:287px;width:19px;height:21px;background:#fff8c5;"></div>
<svg style="position:absolute;left:259px;top:293px;overflow:visible" width="6" height="7" viewBox="0 0 6 7"><path d="M0.8 0.8 L4.5 3.5 L0.8 6.2" stroke="#7a7a7a" stroke-width="1.4" fill="none"/></svg>
<div style="position:absolute;left:254px;top:308px;width:401px;height:1px;background:#a0a0a0;"></div>
<div style="position:absolute;left:271px;top:309px;width:139px;height:21px;background:#fff8c5;"></div>
<div style="position:absolute;left:411px;top:309px;width:19px;height:21px;background:#fff8c5;"></div>
<svg style="position:absolute;left:259px;top:315px;overflow:visible" width="6" height="7" viewBox="0 0 6 7"><path d="M0.8 0.8 L4.5 3.5 L0.8 6.2" stroke="#7a7a7a" stroke-width="1.4" fill="none"/></svg>
<div style="position:absolute;left:430px;top:309px;white-space:pre;font-size:11px;line-height:20px;font-weight:400;color:#000;">Strict</div>
<div style="position:absolute;left:254px;top:330px;width:401px;height:1px;background:#a0a0a0;"></div>
<div style="position:absolute;left:271px;top:331px;width:139px;height:21px;background:#fff8c5;"></div>
<div style="position:absolute;left:411px;top:331px;width:19px;height:21px;background:#fff8c5;"></div>
<div style="position:absolute;left:431px;top:331px;width:223px;height:21px;background:#fff8c5;"></div>
<svg style="position:absolute;left:259px;top:337px;overflow:visible" width="6" height="7" viewBox="0 0 6 7"><path d="M0.8 0.8 L4.5 3.5 L0.8 6.2" stroke="#7a7a7a" stroke-width="1.4" fill="none"/></svg>
<div style="position:absolute;left:430px;top:331px;white-space:pre;font-size:11px;line-height:20px;font-weight:400;color:#000;">0</div>
<div style="position:absolute;left:254px;top:352px;width:401px;height:1px;background:#a0a0a0;"></div>
<div style="position:absolute;left:254px;top:66px;width:1px;height:287px;background:#a0a0a0;"></div>
<div style="position:absolute;left:270px;top:66px;width:1px;height:287px;background:#a0a0a0;"></div>
<div style="position:absolute;left:410px;top:66px;width:1px;height:287px;background:#a0a0a0;"></div>
<div style="position:absolute;left:430px;top:66px;width:1px;height:287px;background:#a0a0a0;"></div>
<div style="position:absolute;left:654px;top:66px;width:1px;height:287px;background:#a0a0a0;"></div>
<div style="position:absolute;left:654px;top:373px;width:1px;height:23px;background:#a0a0a0;"></div>
<div style="position:absolute;left:654px;top:416px;width:1px;height:57px;background:#a0a0a0;"></div>
<svg style="position:absolute;left:419px;top:338px;overflow:visible" width="7" height="8" viewBox="0 0 7 8"><path d="M1 1 L6 7 M6 1 L1 7 M0 4 H7" stroke="#1a2a5a" stroke-width="1.3"/></svg>
<div style="position:absolute;left:271px;top:357px;width:383px;height:16px;background:#b4b4b4;"></div>
<div style="position:absolute;left:254px;top:373px;width:401px;height:1px;background:#a0a0a0;"></div>
<div style="position:absolute;left:410px;top:374px;white-space:pre;font-size:11px;line-height:20px;font-weight:400;color:#000;">Name</div>
<svg style="position:absolute;left:540px;top:381px;overflow:visible" width="6" height="7" viewBox="0 0 6 7"><path d="M0.8 0.8 L4.5 3.5 L0.8 6.2" stroke="#7a7a7a" stroke-width="1.4" fill="none"/></svg>
<div style="position:absolute;left:550px;top:373px;width:1px;height:22px;background:#a0a0a0;"></div>
<div style="position:absolute;left:550px;top:374px;white-space:pre;font-size:11px;line-height:20px;font-weight:400;color:#000;">Description</div>
<div style="position:absolute;left:254px;top:395px;width:401px;height:1px;background:#a0a0a0;"></div>
<div style="position:absolute;left:271px;top:400px;width:383px;height:16px;background:#b4b4b4;"></div>
<div style="position:absolute;left:254px;top:416px;width:401px;height:1px;background:#a0a0a0;"></div>
<div style="position:absolute;left:270px;top:417px;white-space:pre;font-size:11px;line-height:20px;font-weight:400;color:#000;">ID</div>
<svg style="position:absolute;left:453px;top:424px;overflow:visible" width="6" height="7" viewBox="0 0 6 7"><path d="M0.8 0.8 L4.5 3.5 L0.8 6.2" stroke="#7a7a7a" stroke-width="1.4" fill="none"/></svg>
<div style="position:absolute;left:462px;top:416px;width:1px;height:39px;background:#a0a0a0;"></div>
<div style="position:absolute;left:462px;top:417px;white-space:pre;font-size:11px;line-height:20px;font-weight:400;color:#000;">Name</div>
<svg style="position:absolute;left:645px;top:424px;overflow:visible" width="6" height="7" viewBox="0 0 6 7"><path d="M0.8 0.8 L4.5 3.5 L0.8 6.2" stroke="#7a7a7a" stroke-width="1.4" fill="none"/></svg>
<div style="position:absolute;left:254px;top:438px;width:401px;height:1px;background:#a0a0a0;"></div>
<div style="position:absolute;left:271px;top:439px;width:383px;height:15px;background:#fff8c5;"></div>
<div style="position:absolute;left:462px;top:438px;width:1px;height:16px;background:#a0a0a0;"></div>
<svg style="position:absolute;left:259px;top:442px;overflow:visible" width="6" height="7" viewBox="0 0 6 7"><path d="M0.8 0.8 L4.5 3.5 L0.8 6.2" stroke="#7a7a7a" stroke-width="1.4" fill="none"/></svg>
<div style="position:absolute;left:270px;top:436px;white-space:pre;font-size:11px;line-height:20px;font-weight:400;color:#000;">ChildCount</div>
<div style="position:absolute;left:462px;top:436px;white-space:pre;font-size:11px;line-height:20px;font-weight:400;color:#000;">Child Count</div>
<div style="position:absolute;left:254px;top:454px;width:401px;height:1px;background:#a0a0a0;"></div>
<svg style="position:absolute;left:259px;top:458px;overflow:visible" width="6" height="7" viewBox="0 0 6 7"><path d="M0.8 0.8 L4.5 3.5 L0.8 6.2" stroke="#7a7a7a" stroke-width="1.4" fill="none"/></svg>
<div style="position:absolute;left:273px;top:453px;white-space:pre;font-size:11px;line-height:20px;font-weight:400;color:#3030ff;transform:scaleX(1.0079);transform-origin:0px 0;">Add Attribute</div>
<div style="position:absolute;left:254px;top:470px;width:17px;height:1px;background:#a0a0a0;"></div>
<div style="position:absolute;left:254px;top:373px;width:1px;height:98px;background:#a0a0a0;"></div>
<div style="position:absolute;left:270px;top:373px;width:1px;height:98px;background:#a0a0a0;"></div>
<div style="position:absolute;left:197px;top:278px;width:223px;height:146px;background:#f2f2f2;border:1px solid #a0a0a0;box-sizing:border-box"></div>
<div style="position:absolute;left:226px;top:303px;width:1px;height:120px;background:#eaeaea;"></div>
<div style="position:absolute;left:200px;top:281px;width:217px;height:22px;background:#91c9f7;"></div>
<svg style="position:absolute;left:203px;top:284px;overflow:visible" width="18" height="16" viewBox="0 0 18 16" shape-rendering="crispEdges"><rect x="2" y="2" width="4" height="1" fill="#7a7a7a"/><rect x="7" y="2" width="4" height="1" fill="#9a9a9a"/><rect x="0" y="3" width="14" height="10" fill="#90ee90"/><rect x="0" y="3" width="1" height="10" fill="#606060"/><rect x="1" y="3" width="12" height="1" fill="#7a7a7a"/><rect x="1" y="4" width="11" height="1" fill="#ffffff"/><rect x="1" y="5" width="1" height="7" fill="#ffffff"/><rect x="2" y="5" width="10" height="1" fill="#5cc85c"/><rect x="0" y="12" width="14" height="1" fill="#000"/><rect x="13" y="4" width="1" height="9" fill="#000"/><path d="M4.6 14.1 L12.8 5.9" stroke="#101018" stroke-width="2.6" stroke-linecap="round" shape-rendering="auto"/><path d="M4.1 13.5 L12.4 5.2" stroke="#a4d2f8" stroke-width="2" stroke-linecap="round" shape-rendering="auto"/><path d="M3.7 13.2 L12 4.9" stroke="#ffffff" stroke-width="0.9" shape-rendering="auto"/><path d="M12.9 1.6 A2 2 0 1 0 15.3 4" stroke="#101018" stroke-width="1.5" fill="none" shape-rendering="auto"/><path d="M13 2.4 A1.3 1.3 0 1 0 14.6 3.8" stroke="#d8d8d8" stroke-width="0.6" fill="none" shape-rendering="auto"/></svg>
<div style="position:absolute;left:231px;top:283px;white-space:pre;font-size:12px;line-height:20px;font-weight:400;color:#000;">New Object Type</div>
<div style="position:absolute;left:228px;top:307px;width:188px;height:1px;background:#d7d7d7;"></div>
<div style="position:absolute;left:231px;top:315px;white-space:pre;font-size:12px;line-height:20px;font-weight:400;color:#000;">Update Object Type From</div>
<div style="position:absolute;left:228px;top:339px;width:188px;height:1px;background:#d7d7d7;"></div>
<div style="position:absolute;left:231px;top:347px;white-space:pre;font-size:12px;line-height:20px;font-weight:400;color:#8d8d8d;">Copy</div>
<div style="position:absolute;left:374px;top:347px;white-space:pre;font-size:12px;line-height:20px;font-weight:400;color:#8d8d8d;">Ctrl+C</div>
<div style="position:absolute;left:231px;top:369px;white-space:pre;font-size:12px;line-height:20px;font-weight:400;color:#8d8d8d;">Paste</div>
<div style="position:absolute;left:374px;top:369px;white-space:pre;font-size:12px;line-height:20px;font-weight:400;color:#8d8d8d;">Ctrl+V</div>
<div style="position:absolute;left:228px;top:393px;width:188px;height:1px;background:#d7d7d7;"></div>
<div style="position:absolute;left:231px;top:401px;white-space:pre;font-size:12px;line-height:20px;font-weight:400;color:#000;">Delete</div>
<svg style="position:absolute;left:203px;top:347px;overflow:visible" width="16" height="17" viewBox="0 0 16 17"><rect x="0.5" y="0.5" width="9" height="11" fill="#f2f2f2" stroke="#a8a8a8"/><rect x="5.5" y="4.5" width="10" height="11" fill="#f2f2f2" stroke="#a8a8a8"/><path d="M7.5 7.5 H13.5 M7.5 9.5 H13.5 M7.5 11.5 H13.5 M7.5 13.5 H13.5" stroke="#b0b0b0"/></svg>
<svg style="position:absolute;left:203px;top:370px;overflow:visible" width="16" height="16" viewBox="0 0 16 16"><rect x="0.5" y="2.5" width="12" height="13" fill="#f2f2f2" stroke="#a8a8a8"/><rect x="3.5" y="0.5" width="6" height="3" fill="#f2f2f2" stroke="#a8a8a8"/><rect x="6.5" y="7.5" width="8" height="8" fill="#f2f2f2" stroke="#a8a8a8"/><path d="M8.5 10.5 H12.5 M8.5 12.5 H12.5" stroke="#b0b0b0"/></svg>
<svg style="position:absolute;left:203px;top:403px;overflow:visible" width="15" height="15" viewBox="0 0 15 15"><path d="M1.5 1.5 L13.5 13.5 M13.5 1.5 L1.5 13.5" stroke="#4a5a6a" stroke-width="1.6"/></svg>
<div style="position:absolute;left:395px;top:320px;width:138px;height:18px;background:#fff;border:1px solid #000;box-sizing:border-box"></div>
<div style="position:absolute;left:399px;top:320px;white-space:pre;font-size:12px;line-height:20px;font-weight:400;color:#000;letter-spacing:-0.15px;">Create a new object type</div>
<svg style="position:absolute;left:395px;top:300px;overflow:visible" width="13" height="20" viewBox="0 0 13 20"><path d="M0.5 0.5 L0.5 16.3 L4.1 12.8 L6.7 18.8 L9.2 17.8 L6.7 12.1 L11.7 12.1 Z" fill="#fff" stroke="#000" stroke-width="1"/></svg>
<div style="position:absolute;left:0px;top:0px;width:656px;height:1px;background:#8a8a8a;"></div>
<div style="position:absolute;left:0px;top:0px;width:1px;height:474px;background:#8a8a8a;"></div>
<div style="position:absolute;left:655px;top:0px;width:1px;height:474px;background:#8a8a8a;"></div>
<div style="position:absolute;left:0px;top:473px;width:656px;height:1px;background:#8a8a8a;"></div>
</body></html>
